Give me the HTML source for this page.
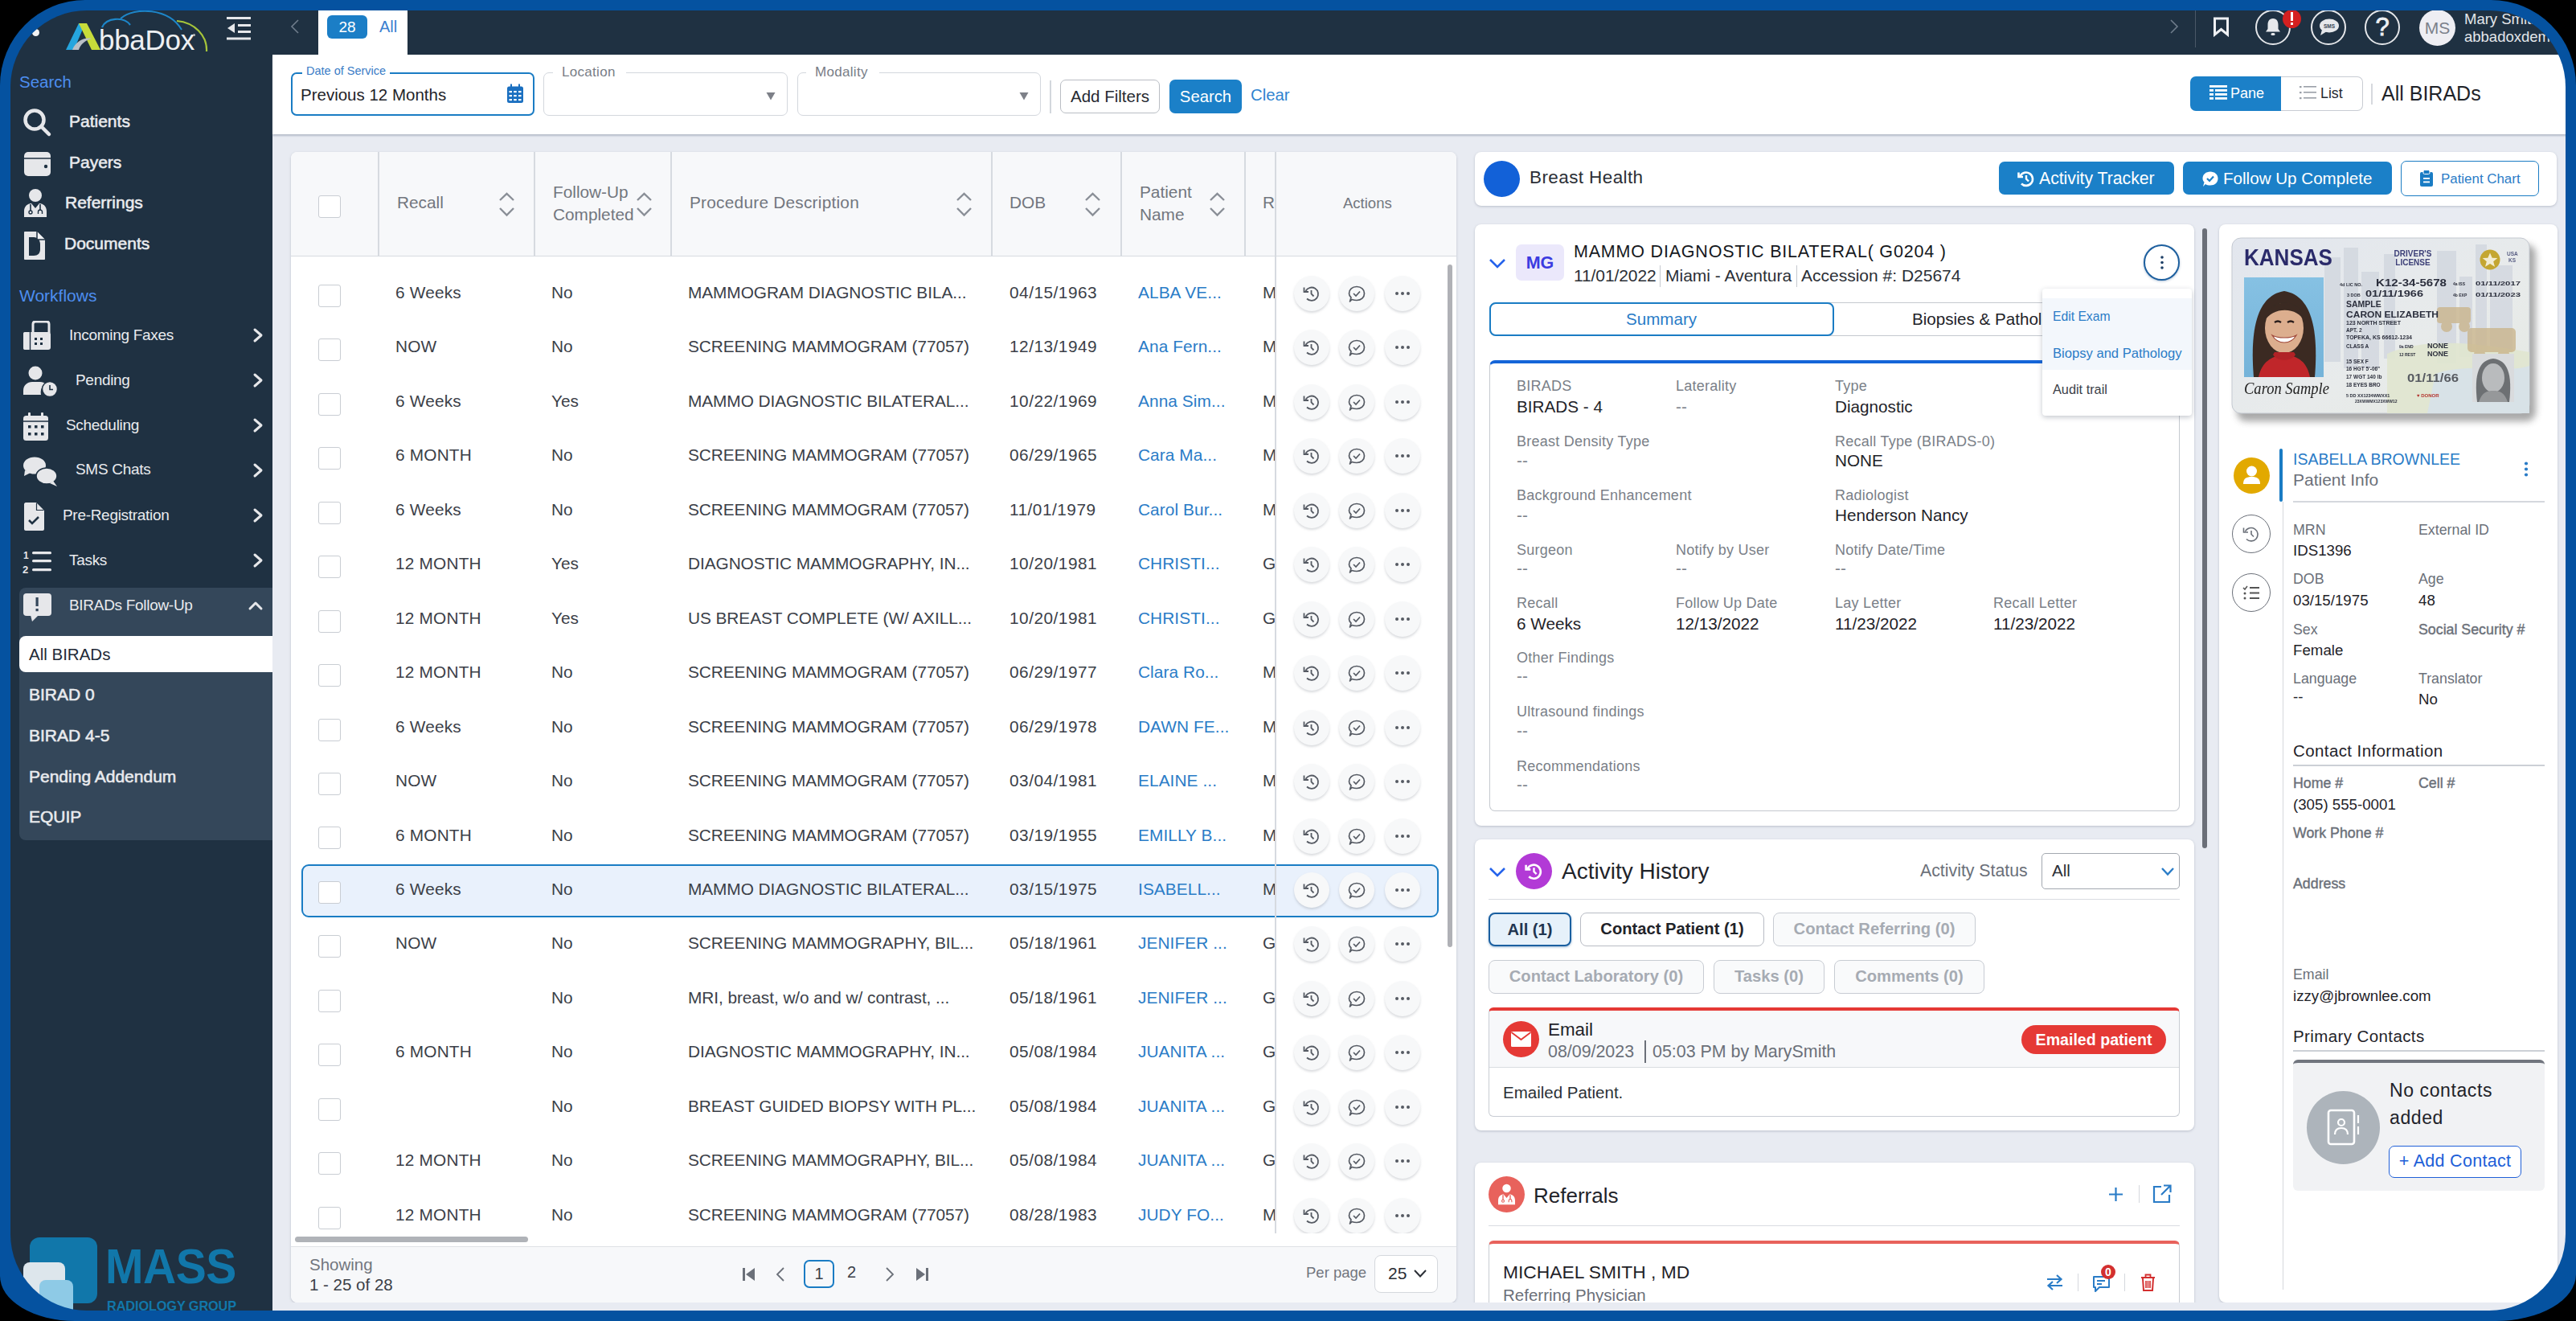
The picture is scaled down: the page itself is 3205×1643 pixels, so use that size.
<!DOCTYPE html>
<html><head><meta charset="utf-8">
<style>
*{box-sizing:border-box;margin:0;padding:0}
html,body{width:3205px;height:1643px;overflow:hidden}
body{font-family:"Liberation Sans",sans-serif;color:#2b2f36;position:relative;background:#e8ebf2}
.a{position:absolute}
.nw{white-space:nowrap}
#frameI{position:absolute;left:13px;top:13px;width:3179px;height:1617px;border-radius:95px;box-shadow:0 0 0 400px #0552a0;z-index:100;pointer-events:none}
#frameO{position:absolute;left:0;top:0;width:3205px;height:1643px;border-radius:106px 106px 100px 93px / 106px 106px 58px 56px;box-shadow:0 0 0 400px #000;z-index:101;pointer-events:none}
#topbar{left:0;top:0;width:3205px;height:68px;background:#1f3142}
#sidebar{left:0;top:0;width:339px;height:1643px;background:#1f3142}
.sb{color:#e9ebee;font-size:21px;font-weight:400;letter-spacing:0px;-webkit-text-stroke:0.55px #e9ebee}
.sbi{color:#e9ebee;font-size:19px;font-weight:400;letter-spacing:-0.3px}
.chev{width:11px;height:11px;border-right:3px solid #e9ebee;border-bottom:3px solid #e9ebee;transform:rotate(-45deg)}
#filter{left:339px;top:68px;width:2866px;height:99px;background:#fff;box-shadow:0 2px 2px rgba(120,130,150,.45)}
.card{background:#fff;border-radius:8px;box-shadow:0 1px 3px rgba(100,110,130,.35)}
</style></head>
<body>
<div id="sidebar" class="a"></div>
<div id="topbar" class="a"></div>
<div id="filter" class="a"></div>

<!-- TOPBAR CONTENT -->
<div class="a" style="left:40px;top:36px;width:9px;height:9px;border-radius:50%;background:#f2f2f2"></div>
<svg class="a" style="left:70px;top:8px" width="200" height="60" viewBox="0 0 200 60">
  <path d="M57 26 C 62 14, 84 12, 92 23" stroke="#1d86c9" stroke-width="2.2" fill="none"/>
  <path d="M80 15 C 98 0, 140 2, 156 29" stroke="#1d86c9" stroke-width="2" fill="none"/>
  <path d="M150 18 C 172 20, 188 36, 187 56" stroke="#a6c53a" stroke-width="2.2" fill="none"/>
  <path d="M12 54 L 28 21 L 36 21 L 22 54 Z" fill="#25a5de"/>
  <path d="M28 21 L 38 21 L 55 54 L 44 54 Z" fill="#c7dc3a"/>
  <path d="M20 54 C 24 44, 34 38, 44 40 C 34 43, 30 48, 28 54 Z" fill="#b9bfc6"/>
</svg>
<div class="a nw" style="left:123px;top:28px;font-size:35px;line-height:44px;color:#eef0f2;letter-spacing:-0.3px">bbaDox</div>
<div class="a" style="left:240px;top:42px;width:3px;height:3px;border-radius:50%;background:#bbb"></div>
<svg class="a" style="left:282px;top:21px" width="31" height="29" viewBox="0 0 31 29">
  <rect x="0" y="0" width="30" height="3" fill="#e6e8eb"/>
  <rect x="14" y="9" width="16" height="3" fill="#e6e8eb"/>
  <rect x="14" y="17" width="16" height="3" fill="#e6e8eb"/>
  <rect x="0" y="25.5" width="30" height="3" fill="#e6e8eb"/>
  <path d="M10 8 L 1 14 L 10 20 Z" fill="#e6e8eb"/>
</svg>
<svg class="a" style="left:360px;top:23px" width="14" height="20" viewBox="0 0 14 20"><path d="M11 2 L 3 10 L 11 18" stroke="#6f7d8c" stroke-width="1.6" fill="none"/></svg>
<div class="a" style="left:396px;top:13px;width:111px;height:55px;background:#fff"></div>
<div class="a nw" style="left:407px;top:19px;width:50px;height:29px;border-radius:6px;background:#1b7ec6;color:#fff;font-size:19px;line-height:29px;text-align:center">28</div>
<div class="a nw" style="left:472px;top:21px;font-size:20px;line-height:24px;color:#3b7fd0">All</div>
<svg class="a" style="left:2698px;top:23px" width="14" height="20" viewBox="0 0 14 20"><path d="M3 2 L 11 10 L 3 18" stroke="#6f7d8c" stroke-width="1.6" fill="none"/></svg>
<div class="a" style="left:2731px;top:13px;width:1px;height:46px;background:#4a5868"></div>
<svg class="a" style="left:2753px;top:21px" width="21" height="25" viewBox="0 0 21 25"><path d="M2.5 2 H18.5 V22 L10.5 15.5 L2.5 22 Z" stroke="#eef0f3" stroke-width="3" fill="none" stroke-linejoin="miter"/></svg>
<div class="a" style="left:2806px;top:12px;width:44px;height:44px;border-radius:50%;border:2px solid #e5e7ea"></div>
<svg class="a" style="left:2815px;top:20px" width="26" height="26" viewBox="0 0 26 26"><path d="M13 3 C 8 3, 6.5 7, 6.5 11 V 16 L 4 19.5 H 22 L 19.5 16 V 11 C 19.5 7, 18 3, 13 3 Z" fill="#e6e8eb"/><rect x="10.5" y="21" width="5" height="3" rx="1.5" fill="#e6e8eb"/></svg>
<div class="a" style="left:2840px;top:12px;width:23px;height:23px;border-radius:50%;background:#d42020"></div>
<div class="a" style="left:2850px;top:15px;width:3px;height:11px;background:#fff"></div>
<div class="a" style="left:2850px;top:28px;width:3px;height:3px;background:#fff"></div>
<div class="a" style="left:2875px;top:12px;width:44px;height:44px;border-radius:50%;border:2px solid #e5e7ea"></div>
<svg class="a" style="left:2884px;top:22px" width="28" height="24" viewBox="0 0 28 24"><ellipse cx="14" cy="10" rx="12" ry="8.5" fill="#e6e8eb"/><path d="M5 15 L 3 22 L 11 17 Z" fill="#e6e8eb"/><text x="14" y="12.5" font-size="6.5" font-family="Liberation Sans" font-weight="700" text-anchor="middle" fill="#3a4756">SMS</text></svg>
<div class="a" style="left:2942px;top:12px;width:44px;height:44px;border-radius:50%;border:2px solid #e5e7ea"></div>
<div class="a nw" style="left:2942px;top:14px;width:44px;text-align:center;font-size:31px;line-height:40px;font-weight:400;color:#eef0f3;-webkit-text-stroke:0.8px #eef0f3">?</div>
<div class="a" style="left:3010px;top:12px;width:45px;height:45px;border-radius:50%;background:#eeeef3"></div>
<div class="a nw" style="left:3010px;top:22px;width:45px;text-align:center;font-size:21px;line-height:26px;color:#7c818b">MS</div>
<div class="a nw" style="left:3066px;top:13px;font-size:18.5px;line-height:22px;color:#e3e6ea">Mary Smith</div>
<div class="a nw" style="left:3066px;top:35px;font-size:18.5px;line-height:22px;color:#e3e6ea">abbadoxdemo</div>

<!-- SIDEBAR CONTENT -->
<div class="a nw" style="left:24px;top:90px;font-size:20.5px;line-height:24px;color:#4d8ef0">Search</div>
<svg class="a" style="left:28px;top:134px" width="38" height="37" viewBox="0 0 38 37"><circle cx="15" cy="15" r="11.5" stroke="#e6e7ea" stroke-width="4.5" fill="none"/><path d="M23.5 23.5 L 33 33" stroke="#e6e7ea" stroke-width="4.5" stroke-linecap="round"/></svg>
<div class="a nw sb" style="left:86px;top:139px;line-height:24px">Patients</div>
<svg class="a" style="left:29px;top:188px" width="36" height="32" viewBox="0 0 36 32"><rect x="1" y="1" width="33" height="30" rx="5" fill="#e6e7ea"/><path d="M1 9 H34" stroke="#1f3142" stroke-width="1.6"/><circle cx="28" cy="19" r="2.2" fill="#1f3142"/></svg>
<div class="a nw sb" style="left:86px;top:190px;line-height:24px">Payers</div>
<svg class="a" style="left:29px;top:235px" width="32" height="36" viewBox="0 0 32 36"><circle cx="15" cy="8" r="8" fill="#e6e7ea"/><path d="M1 35 V 28 C 1 21, 6 18, 10 18 L 15 24 L 20 18 C 24 18, 29 21, 29 28 V 35 Z" fill="#e6e7ea"/><path d="M9 19 V 27 M 21 19 V 27" stroke="#1f3142" stroke-width="1.6"/><circle cx="9" cy="29" r="2" stroke="#1f3142" stroke-width="1.4" fill="none"/><path d="M18.5 31 V 28.5 A 2.5 2.5 0 0 1 23.5 28.5 V 31" stroke="#1f3142" stroke-width="1.4" fill="none"/></svg>
<div class="a nw sb" style="left:81px;top:240px;line-height:24px">Referrings</div>
<svg class="a" style="left:29px;top:287px" width="28" height="37" viewBox="0 0 28 37"><path d="M1 2 C 1 1.5, 1.5 1, 2 1 H 17 L 27 11 V 35 C 27 35.5, 26.5 36, 26 36 H 2 C 1.5 36, 1 35.5, 1 35 Z" fill="#e6e7ea"/><path d="M7 8 H 13 C 18 8, 21 12, 21 17 V 23 C 21 28, 18 31, 13 31 H 7 Z" fill="#1f3142"/><path d="M17 1 V 10 C 17 10.5, 17.5 11, 18 11 H 27" stroke="#1f3142" stroke-width="1.5" fill="#f2f3f5"/></svg>
<div class="a nw sb" style="left:80px;top:291px;line-height:24px">Documents</div>
<div class="a nw" style="left:24px;top:356px;font-size:21px;line-height:24px;color:#4d8ef0">Workflows</div>
<svg class="a" style="left:28px;top:399px" width="38" height="38" viewBox="0 0 38 38"><rect x="1" y="14" width="34" height="22" rx="3" fill="#e6e7ea"/><rect x="1" y="14" width="8" height="22" rx="2" fill="#e6e7ea"/><path d="M13 15 V 4 C 13 2, 14 1, 16 1 H 30 C 32 1, 33 2, 33 4 V 15" stroke="#e6e7ea" stroke-width="3" fill="none"/><path d="M9.5 14 V 36" stroke="#1f3142" stroke-width="1.4"/><rect x="15" y="21" width="3" height="3" fill="#1f3142"/><rect x="22" y="21" width="3" height="3" fill="#1f3142"/><rect x="15" y="27" width="3" height="3" fill="#1f3142"/><rect x="22" y="27" width="3" height="3" fill="#1f3142"/></svg>
<div class="a nw sbi" style="left:86px;top:406px;line-height:22px">Incoming Faxes</div>
<svg class="a" style="left:312px;top:407px" width="18" height="20" viewBox="0 0 18 20"><path d="M5 3 L 13 10 L 5 17" stroke="#e6e7ea" stroke-width="3" fill="none" stroke-linecap="round" stroke-linejoin="round"/></svg>

<svg class="a" style="left:28px;top:455px" width="46" height="38" viewBox="0 0 46 38"><circle cx="16" cy="9" r="8.5" fill="#e6e7ea"/><path d="M1 36 V 31 C 1 24, 6 20, 12 20 H 22 C 25 20, 27 21, 28 22 C 24 25, 22 30, 23 36 Z" fill="#e6e7ea"/><circle cx="34" cy="29" r="9.5" fill="#e6e7ea" stroke="#1f3142" stroke-width="1.5"/><path d="M34 24 V 29.5 H 38" stroke="#1f3142" stroke-width="1.6" fill="none"/></svg>
<div class="a nw sbi" style="left:94px;top:462px;line-height:22px">Pending</div>
<svg class="a" style="left:312px;top:463px" width="18" height="20" viewBox="0 0 18 20"><path d="M5 3 L 13 10 L 5 17" stroke="#e6e7ea" stroke-width="3" fill="none" stroke-linecap="round" stroke-linejoin="round"/></svg>

<svg class="a" style="left:28px;top:512px" width="34" height="37" viewBox="0 0 34 37"><rect x="1" y="5" width="31" height="31" rx="3.5" fill="#e6e7ea"/><rect x="7" y="1" width="3" height="8" rx="1" fill="#e6e7ea"/><rect x="23" y="1" width="3" height="8" rx="1" fill="#e6e7ea"/><path d="M1 12 H32" stroke="#1f3142" stroke-width="1.5"/><g fill="#1f3142"><rect x="7" y="17" width="3.5" height="3.5"/><rect x="15" y="17" width="3.5" height="3.5"/><rect x="23" y="17" width="3.5" height="3.5"/><rect x="7" y="26" width="3.5" height="3.5"/><rect x="15" y="26" width="3.5" height="3.5"/><rect x="23" y="26" width="3.5" height="3.5"/></g></svg>
<div class="a nw sbi" style="left:82px;top:518px;line-height:22px">Scheduling</div>
<svg class="a" style="left:312px;top:519px" width="18" height="20" viewBox="0 0 18 20"><path d="M5 3 L 13 10 L 5 17" stroke="#e6e7ea" stroke-width="3" fill="none" stroke-linecap="round" stroke-linejoin="round"/></svg>

<svg class="a" style="left:28px;top:568px" width="46" height="38" viewBox="0 0 46 38"><ellipse cx="15" cy="11" rx="14" ry="10.5" fill="#e6e7ea"/><path d="M3 17 L 2 24 L 10 20 Z" fill="#e6e7ea"/><ellipse cx="30" cy="24" rx="13" ry="10" fill="#e6e7ea" stroke="#1f3142" stroke-width="1.6"/><path d="M38 30 L 43 37 L 34 33 Z" fill="#e6e7ea"/></svg>
<div class="a nw sbi" style="left:94px;top:573px;line-height:22px">SMS Chats</div>
<svg class="a" style="left:312px;top:575px" width="18" height="20" viewBox="0 0 18 20"><path d="M5 3 L 13 10 L 5 17" stroke="#e6e7ea" stroke-width="3" fill="none" stroke-linecap="round" stroke-linejoin="round"/></svg>

<svg class="a" style="left:28px;top:624px" width="30" height="38" viewBox="0 0 30 38"><path d="M2 3 C 2 2, 3 1, 4 1 H 17 L 27 11 V 34 C 27 35, 26 36, 25 36 H 4 C 3 36, 2 35, 2 34 Z" fill="#e6e7ea"/><path d="M17 1 V 11 H 27" fill="#1f3142"/><path d="M17 1 L 27 11 H 18 C 17.5 11, 17 10.5, 17 10 Z" fill="#e6e7ea"/><path d="M17.5 1.5 V 10.5 H 26.5" stroke="#1f3142" stroke-width="1.2" fill="none"/><path d="M8 23 L 12 27 L 20 19" stroke="#1f3142" stroke-width="2.5" fill="none"/></svg>
<div class="a nw sbi" style="left:78px;top:630px;line-height:22px">Pre-Registration</div>
<svg class="a" style="left:312px;top:631px" width="18" height="20" viewBox="0 0 18 20"><path d="M5 3 L 13 10 L 5 17" stroke="#e6e7ea" stroke-width="3" fill="none" stroke-linecap="round" stroke-linejoin="round"/></svg>

<svg class="a" style="left:28px;top:683px" width="38" height="32" viewBox="0 0 38 32"><text x="1" y="12" font-size="12" font-weight="700" font-family="Liberation Sans" fill="#e6e7ea">1</text><text x="0" y="30" font-size="13" font-weight="700" font-family="Liberation Sans" fill="#e6e7ea">2</text><rect x="12" y="3" width="24" height="3.2" rx="1.5" fill="#e6e7ea"/><rect x="12" y="13" width="24" height="3.2" rx="1.5" fill="#e6e7ea"/><rect x="12" y="24" width="24" height="3.2" rx="1.5" fill="#e6e7ea"/></svg>
<div class="a nw sbi" style="left:86px;top:686px;line-height:22px">Tasks</div>
<svg class="a" style="left:312px;top:687px" width="18" height="20" viewBox="0 0 18 20"><path d="M5 3 L 13 10 L 5 17" stroke="#e6e7ea" stroke-width="3" fill="none" stroke-linecap="round" stroke-linejoin="round"/></svg>

<div class="a" style="left:24px;top:731px;width:315px;height:314px;border-radius:8px 0 0 8px;background:#34475a"></div>
<svg class="a" style="left:28px;top:737px" width="38" height="37" viewBox="0 0 38 37"><rect x="1" y="1" width="35" height="28" rx="4" fill="#e6e7ea"/><path d="M10 28 L 12 36 L 20 28 Z" fill="#e6e7ea"/><rect x="16.5" y="6" width="3.2" height="11" fill="#34475a"/><rect x="16.5" y="20" width="3.2" height="3.2" fill="#34475a"/></svg>
<div class="a nw sbi" style="left:86px;top:742px;line-height:22px">BIRADs Follow-Up</div>
<svg class="a" style="left:308px;top:744px" width="20" height="18" viewBox="0 0 20 18"><path d="M3 13 L 10 6 L 17 13" stroke="#e6e7ea" stroke-width="3" fill="none" stroke-linecap="round" stroke-linejoin="round"/></svg>
<div class="a" style="left:24px;top:791px;width:315px;height:45px;border-radius:8px 0 0 8px;background:#fff"></div>
<div class="a nw" style="left:36px;top:802px;font-size:20.5px;line-height:24px;color:#1f2a37">All BIRADs</div>
<div class="a nw sb" style="left:36px;top:852px;line-height:24px;font-weight:500">BIRAD 0</div>
<div class="a nw sb" style="left:36px;top:903px;line-height:24px;font-weight:500">BIRAD 4-5</div>
<div class="a nw sb" style="left:36px;top:954px;line-height:24px;font-weight:500">Pending Addendum</div>
<div class="a nw sb" style="left:36px;top:1004px;line-height:24px;font-weight:500">EQUIP</div>
<!-- MASS logo -->
<div class="a" style="left:37px;top:1539px;width:84px;height:82px;border-radius:12px;background:#1177aa"></div>
<div class="a" style="left:29px;top:1570px;width:52px;height:70px;border-radius:8px;background:#dde6ec"></div>
<div class="a" style="left:49px;top:1592px;width:42px;height:60px;border-radius:8px;background:#8ecae6"></div>
<div class="a nw" style="left:131px;top:1540px;font-size:61px;line-height:70px;font-weight:700;color:#1177aa;letter-spacing:-0.5px;transform:scaleX(0.935);transform-origin:0 0">MASS</div>
<div class="a nw" style="left:133px;top:1615px;font-size:16.3px;line-height:18px;font-weight:700;color:#1177aa;letter-spacing:-0.1px">RADIOLOGY GROUP</div>

<!-- FILTER BAR -->
<div class="a" style="left:362px;top:90px;width:303px;height:54px;border:2.5px solid #1a7cc4;border-radius:7px"></div>
<div class="a nw" style="left:376px;top:80px;padding:0 5px;background:#fff;font-size:14.5px;line-height:17px;color:#3a7cc6">Date of Service</div>
<div class="a nw" style="left:374px;top:106px;font-size:20.5px;line-height:24px;color:#1f2329">Previous 12 Months</div>
<svg class="a" style="left:630px;top:104px" width="22" height="25" viewBox="0 0 22 25"><rect x="1" y="3.5" width="20" height="20.5" rx="2.5" fill="#1a6fc0"/><rect x="5" y="0.5" width="2" height="5" fill="#1a6fc0"/><rect x="15" y="0.5" width="2" height="5" fill="#1a6fc0"/><g fill="#fff"><rect x="3.5" y="9" width="3.5" height="2.2"/><rect x="9.2" y="9" width="3.5" height="2.2"/><rect x="15" y="9" width="3.5" height="2.2"/><rect x="3.5" y="14" width="3.5" height="2.2"/><rect x="9.2" y="14" width="3.5" height="2.2"/><rect x="15" y="14" width="3.5" height="2.2"/><rect x="3.5" y="19" width="3.5" height="2.2"/><rect x="9.2" y="19" width="3.5" height="2.2"/><rect x="15" y="19" width="3.5" height="2.2"/></g></svg>
<div class="a" style="left:676px;top:90px;width:304px;height:54px;border:1.5px solid #d3d7dd;border-radius:7px"></div>
<div class="a nw" style="left:688px;top:80px;width:91px;padding-left:11px;background:#fff;font-size:17px;line-height:20px;color:#787d86;letter-spacing:0.3px">Location</div>
<svg class="a" style="left:953px;top:114px" width="12" height="11" viewBox="0 0 12 11"><path d="M0.5 1 H 11.5 L 6 10.5 Z" fill="#7d8088"/></svg>
<div class="a" style="left:992px;top:90px;width:303px;height:54px;border:1.5px solid #d3d7dd;border-radius:7px"></div>
<div class="a nw" style="left:1003px;top:80px;width:91px;padding-left:11px;background:#fff;font-size:17px;line-height:20px;color:#787d86;letter-spacing:0.3px">Modality</div>
<svg class="a" style="left:1268px;top:114px" width="12" height="11" viewBox="0 0 12 11"><path d="M0.5 1 H 11.5 L 6 10.5 Z" fill="#7d8088"/></svg>
<div class="a" style="left:1306px;top:100px;width:1.5px;height:41px;background:#d3d7dd"></div>
<div class="a nw" style="left:1319px;top:99px;width:124px;height:42px;border:1.5px solid #b9bdc4;border-radius:7px;font-size:20.5px;line-height:39px;text-align:center;color:#262a31">Add Filters</div>
<div class="a nw" style="left:1455px;top:99px;width:90px;height:42px;background:#1b80c8;border-radius:7px;font-size:20.3px;line-height:42px;text-align:center;color:#fff">Search</div>
<div class="a nw" style="left:1556px;top:106px;font-size:20.3px;line-height:24px;color:#2f83d0">Clear</div>
<div class="a" style="left:2725px;top:95px;width:114px;height:43px;background:#1b80c8;border-radius:7px 0 0 7px"></div>
<div class="a" style="left:2838px;top:95px;width:102px;height:43px;border:1.5px solid #c8ccd3;border-left:none;border-radius:0 7px 7px 0;background:#fff"></div>
<svg class="a" style="left:2749px;top:106px" width="22" height="18" viewBox="0 0 22 18"><g fill="#fff"><rect x="0" y="0" width="22" height="2.8"/><rect x="0" y="5" width="5" height="2.8"/><rect x="7" y="5" width="15" height="2.8"/><rect x="0" y="10" width="5" height="2.8"/><rect x="7" y="10" width="15" height="2.8"/><rect x="0" y="15" width="5" height="2.8"/><rect x="7" y="15" width="15" height="2.8"/></g></svg>
<div class="a nw" style="left:2775px;top:105px;font-size:18px;line-height:22px;color:#fff">Pane</div>
<svg class="a" style="left:2861px;top:106px" width="21" height="18" viewBox="0 0 21 18"><g fill="#9aa0a8"><rect x="0" y="1" width="2.5" height="2.2"/><rect x="0" y="8" width="2.5" height="2.2"/><rect x="0" y="15" width="2.5" height="2.2"/><rect x="5" y="1" width="16" height="1.6"/><rect x="5" y="8" width="16" height="1.6"/><rect x="5" y="15" width="16" height="1.6"/></g></svg>
<div class="a nw" style="left:2887px;top:105px;font-size:17.8px;line-height:22px;color:#262a31">List</div>
<div class="a" style="left:2950px;top:104px;width:1.5px;height:26px;background:#d6d9de"></div>
<div class="a nw" style="left:2963px;top:102px;font-size:25px;line-height:28px;color:#1f2329">All BIRADs</div>
<!-- TABLE CARD -->
<div class="a card" style="left:362px;top:189px;width:1450px;height:1431px;overflow:hidden">
<div class="a" style="left:0;top:0;width:1450px;height:130px;background:#f7f8fa;border-bottom:1.5px solid #d6dae0"></div>
<div class="a" style="left:0;top:1361px;width:1450px;height:70px;background:#f7f8fa;border-top:1.5px solid #dfe2e6"></div>
</div>
<div class="a" style="left:470px;top:189px;width:1.5px;height:130px;background:#d6dae0"></div>
<div class="a" style="left:664px;top:189px;width:1.5px;height:130px;background:#d6dae0"></div>
<div class="a" style="left:834px;top:189px;width:1.5px;height:130px;background:#d6dae0"></div>
<div class="a" style="left:1233px;top:189px;width:1.5px;height:130px;background:#d6dae0"></div>
<div class="a" style="left:1394px;top:189px;width:1.5px;height:130px;background:#d6dae0"></div>
<div class="a" style="left:1548px;top:189px;width:1.5px;height:130px;background:#d6dae0"></div>
<div class="a" style="left:396px;top:243px;width:28px;height:28px;border:1.5px solid #c9cdd3;border-radius:3px;background:#fff"></div>
<div class="a nw" style="left:494px;top:238px;font-size:20.8px;line-height:28px;color:#72767e">Recall</div>
<svg class="a" style="left:620px;top:239px" width="21" height="31" viewBox="0 0 21 31"><path d="M2 10 L 10.5 2 L 19 10 M 2 20 L 10.5 28.5 L 19 20" stroke="#8a8f97" stroke-width="2.4" fill="none"/></svg>

<div class="a nw" style="left:688px;top:225px;font-size:20.8px;line-height:28px;color:#72767e">Follow-Up<br>Completed</div>
<svg class="a" style="left:791px;top:239px" width="21" height="31" viewBox="0 0 21 31"><path d="M2 10 L 10.5 2 L 19 10 M 2 20 L 10.5 28.5 L 19 20" stroke="#8a8f97" stroke-width="2.4" fill="none"/></svg>

<div class="a nw" style="left:858px;top:238px;font-size:20.8px;line-height:28px;color:#72767e;letter-spacing:0.25px">Procedure Description</div>
<svg class="a" style="left:1189px;top:239px" width="21" height="31" viewBox="0 0 21 31"><path d="M2 10 L 10.5 2 L 19 10 M 2 20 L 10.5 28.5 L 19 20" stroke="#8a8f97" stroke-width="2.4" fill="none"/></svg>

<div class="a nw" style="left:1256px;top:238px;font-size:20.8px;line-height:28px;color:#72767e">DOB</div>
<svg class="a" style="left:1349px;top:239px" width="21" height="31" viewBox="0 0 21 31"><path d="M2 10 L 10.5 2 L 19 10 M 2 20 L 10.5 28.5 L 19 20" stroke="#8a8f97" stroke-width="2.4" fill="none"/></svg>

<div class="a nw" style="left:1418px;top:225px;font-size:20.8px;line-height:28px;color:#72767e">Patient<br>Name</div>
<svg class="a" style="left:1504px;top:239px" width="21" height="31" viewBox="0 0 21 31"><path d="M2 10 L 10.5 2 L 19 10 M 2 20 L 10.5 28.5 L 19 20" stroke="#8a8f97" stroke-width="2.4" fill="none"/></svg>

<div class="a" style="left:1548px;top:189px;width:38px;height:130px;overflow:hidden"><div class="a nw" style="left:23px;top:49px;font-size:20.8px;line-height:28px;color:#72767e">Re</div></div>
<div class="a nw" style="left:1671px;top:241px;font-size:18.5px;line-height:24px;color:#72767e">Actions</div>
<div class="a" style="left:362px;top:320px;width:1450px;height:1214px;overflow:hidden">
<div class="a" style="left:34px;top:34px;width:28px;height:28px;border:1.5px solid #c9cdd3;border-radius:3px;background:#fff"></div>
<div class="a nw" style="left:130px;top:31px;font-size:20.8px;line-height:26px;color:#3b4048;letter-spacing:0.2px">6 Weeks</div>
<div class="a nw" style="left:324px;top:31px;font-size:20.8px;line-height:26px;color:#3b4048">No</div>
<div class="a nw" style="left:494px;top:31px;font-size:20.8px;line-height:26px;color:#3b4048;letter-spacing:-0.05px">MAMMOGRAM DIAGNOSTIC BILA...</div>
<div class="a nw" style="left:894px;top:31px;font-size:20.8px;line-height:26px;color:#3b4048;letter-spacing:0.5px">04/15/1963</div>
<div class="a nw" style="left:1054px;top:31px;font-size:20.8px;line-height:26px;color:#3b4048;color:#2a7cc7;letter-spacing:0.1px">ALBA VE...</div>
<div class="a" style="left:1186px;top:31px;width:38px;height:30px;overflow:hidden"><div class="a nw" style="left:23px;top:0;font-size:20.8px;line-height:26px;color:#3b4048">M</div></div>
<div class="a" style="left:1248.4px;top:23.0px;width:44px;height:44px;border-radius:50%;background:#f7f8f9;box-shadow:0 2px 3px rgba(120,125,135,.28)"></div>
<div class="a" style="left:1304.4px;top:23.0px;width:44px;height:44px;border-radius:50%;background:#f7f8f9;box-shadow:0 2px 3px rgba(120,125,135,.28)"></div>
<div class="a" style="left:1360.7px;top:23.0px;width:44px;height:44px;border-radius:50%;background:#f7f8f9;box-shadow:0 2px 3px rgba(120,125,135,.28)"></div>
<svg class="a" style="left:1258.4px;top:33.0px" width="24" height="24" viewBox="0 0 24 24"><path d="M4.5 9 A 8.2 8.2 0 1 1 6 18.5" stroke="#555a63" stroke-width="1.8" fill="none"/><path d="M2.5 4.5 V 10 H 8" stroke="#555a63" stroke-width="1.8" fill="none"/><path d="M11.5 8 V 12.5 L 14.5 15.5" stroke="#555a63" stroke-width="1.8" fill="none"/></svg>
<svg class="a" style="left:1314.4px;top:33.0px" width="24" height="24" viewBox="0 0 24 24"><path d="M6 19.5 L 3.5 22 L 5 17 C 3 15.5, 2.5 13.5, 2.5 12 C 2.5 7, 6.5 3.5, 12 3.5 C 17.5 3.5, 21.5 7, 21.5 12 C 21.5 17, 17.5 20.5, 12 20.5 C 9.5 20.5, 7.5 20, 6 19.5 Z" stroke="#555a63" stroke-width="1.7" fill="none" stroke-linejoin="round"/><path d="M8 12 L 11 15 L 16 9.5" stroke="#555a63" stroke-width="1.7" fill="none"/></svg>
<svg class="a" style="left:1372.7px;top:42.0px" width="20" height="6" viewBox="0 0 20 6"><circle cx="3" cy="3" r="2" fill="#555a63"/><circle cx="10" cy="3" r="2" fill="#555a63"/><circle cx="17" cy="3" r="2" fill="#555a63"/></svg>
<div class="a" style="left:34px;top:101px;width:28px;height:28px;border:1.5px solid #c9cdd3;border-radius:3px;background:#fff"></div>
<div class="a nw" style="left:130px;top:98px;font-size:20.8px;line-height:26px;color:#3b4048;letter-spacing:0.2px">NOW</div>
<div class="a nw" style="left:324px;top:98px;font-size:20.8px;line-height:26px;color:#3b4048">No</div>
<div class="a nw" style="left:494px;top:98px;font-size:20.8px;line-height:26px;color:#3b4048;letter-spacing:-0.05px">SCREENING MAMMOGRAM (77057)</div>
<div class="a nw" style="left:894px;top:98px;font-size:20.8px;line-height:26px;color:#3b4048;letter-spacing:0.5px">12/13/1949</div>
<div class="a nw" style="left:1054px;top:98px;font-size:20.8px;line-height:26px;color:#3b4048;color:#2a7cc7;letter-spacing:0.1px">Ana Fern...</div>
<div class="a" style="left:1186px;top:98px;width:38px;height:30px;overflow:hidden"><div class="a nw" style="left:23px;top:0;font-size:20.8px;line-height:26px;color:#3b4048">M</div></div>
<div class="a" style="left:1248.4px;top:90.4px;width:44px;height:44px;border-radius:50%;background:#f7f8f9;box-shadow:0 2px 3px rgba(120,125,135,.28)"></div>
<div class="a" style="left:1304.4px;top:90.4px;width:44px;height:44px;border-radius:50%;background:#f7f8f9;box-shadow:0 2px 3px rgba(120,125,135,.28)"></div>
<div class="a" style="left:1360.7px;top:90.4px;width:44px;height:44px;border-radius:50%;background:#f7f8f9;box-shadow:0 2px 3px rgba(120,125,135,.28)"></div>
<svg class="a" style="left:1258.4px;top:100.4px" width="24" height="24" viewBox="0 0 24 24"><path d="M4.5 9 A 8.2 8.2 0 1 1 6 18.5" stroke="#555a63" stroke-width="1.8" fill="none"/><path d="M2.5 4.5 V 10 H 8" stroke="#555a63" stroke-width="1.8" fill="none"/><path d="M11.5 8 V 12.5 L 14.5 15.5" stroke="#555a63" stroke-width="1.8" fill="none"/></svg>
<svg class="a" style="left:1314.4px;top:100.4px" width="24" height="24" viewBox="0 0 24 24"><path d="M6 19.5 L 3.5 22 L 5 17 C 3 15.5, 2.5 13.5, 2.5 12 C 2.5 7, 6.5 3.5, 12 3.5 C 17.5 3.5, 21.5 7, 21.5 12 C 21.5 17, 17.5 20.5, 12 20.5 C 9.5 20.5, 7.5 20, 6 19.5 Z" stroke="#555a63" stroke-width="1.7" fill="none" stroke-linejoin="round"/><path d="M8 12 L 11 15 L 16 9.5" stroke="#555a63" stroke-width="1.7" fill="none"/></svg>
<svg class="a" style="left:1372.7px;top:109.4px" width="20" height="6" viewBox="0 0 20 6"><circle cx="3" cy="3" r="2" fill="#555a63"/><circle cx="10" cy="3" r="2" fill="#555a63"/><circle cx="17" cy="3" r="2" fill="#555a63"/></svg>
<div class="a" style="left:34px;top:169px;width:28px;height:28px;border:1.5px solid #c9cdd3;border-radius:3px;background:#fff"></div>
<div class="a nw" style="left:130px;top:166px;font-size:20.8px;line-height:26px;color:#3b4048;letter-spacing:0.2px">6 Weeks</div>
<div class="a nw" style="left:324px;top:166px;font-size:20.8px;line-height:26px;color:#3b4048">Yes</div>
<div class="a nw" style="left:494px;top:166px;font-size:20.8px;line-height:26px;color:#3b4048;letter-spacing:-0.05px">MAMMO DIAGNOSTIC BILATERAL...</div>
<div class="a nw" style="left:894px;top:166px;font-size:20.8px;line-height:26px;color:#3b4048;letter-spacing:0.5px">10/22/1969</div>
<div class="a nw" style="left:1054px;top:166px;font-size:20.8px;line-height:26px;color:#3b4048;color:#2a7cc7;letter-spacing:0.1px">Anna Sim...</div>
<div class="a" style="left:1186px;top:166px;width:38px;height:30px;overflow:hidden"><div class="a nw" style="left:23px;top:0;font-size:20.8px;line-height:26px;color:#3b4048">M</div></div>
<div class="a" style="left:1248.4px;top:157.9px;width:44px;height:44px;border-radius:50%;background:#f7f8f9;box-shadow:0 2px 3px rgba(120,125,135,.28)"></div>
<div class="a" style="left:1304.4px;top:157.9px;width:44px;height:44px;border-radius:50%;background:#f7f8f9;box-shadow:0 2px 3px rgba(120,125,135,.28)"></div>
<div class="a" style="left:1360.7px;top:157.9px;width:44px;height:44px;border-radius:50%;background:#f7f8f9;box-shadow:0 2px 3px rgba(120,125,135,.28)"></div>
<svg class="a" style="left:1258.4px;top:167.9px" width="24" height="24" viewBox="0 0 24 24"><path d="M4.5 9 A 8.2 8.2 0 1 1 6 18.5" stroke="#555a63" stroke-width="1.8" fill="none"/><path d="M2.5 4.5 V 10 H 8" stroke="#555a63" stroke-width="1.8" fill="none"/><path d="M11.5 8 V 12.5 L 14.5 15.5" stroke="#555a63" stroke-width="1.8" fill="none"/></svg>
<svg class="a" style="left:1314.4px;top:167.9px" width="24" height="24" viewBox="0 0 24 24"><path d="M6 19.5 L 3.5 22 L 5 17 C 3 15.5, 2.5 13.5, 2.5 12 C 2.5 7, 6.5 3.5, 12 3.5 C 17.5 3.5, 21.5 7, 21.5 12 C 21.5 17, 17.5 20.5, 12 20.5 C 9.5 20.5, 7.5 20, 6 19.5 Z" stroke="#555a63" stroke-width="1.7" fill="none" stroke-linejoin="round"/><path d="M8 12 L 11 15 L 16 9.5" stroke="#555a63" stroke-width="1.7" fill="none"/></svg>
<svg class="a" style="left:1372.7px;top:176.9px" width="20" height="6" viewBox="0 0 20 6"><circle cx="3" cy="3" r="2" fill="#555a63"/><circle cx="10" cy="3" r="2" fill="#555a63"/><circle cx="17" cy="3" r="2" fill="#555a63"/></svg>
<div class="a" style="left:34px;top:236px;width:28px;height:28px;border:1.5px solid #c9cdd3;border-radius:3px;background:#fff"></div>
<div class="a nw" style="left:130px;top:233px;font-size:20.8px;line-height:26px;color:#3b4048;letter-spacing:0.2px">6 MONTH</div>
<div class="a nw" style="left:324px;top:233px;font-size:20.8px;line-height:26px;color:#3b4048">No</div>
<div class="a nw" style="left:494px;top:233px;font-size:20.8px;line-height:26px;color:#3b4048;letter-spacing:-0.05px">SCREENING MAMMOGRAM (77057)</div>
<div class="a nw" style="left:894px;top:233px;font-size:20.8px;line-height:26px;color:#3b4048;letter-spacing:0.5px">06/29/1965</div>
<div class="a nw" style="left:1054px;top:233px;font-size:20.8px;line-height:26px;color:#3b4048;color:#2a7cc7;letter-spacing:0.1px">Cara Ma...</div>
<div class="a" style="left:1186px;top:233px;width:38px;height:30px;overflow:hidden"><div class="a nw" style="left:23px;top:0;font-size:20.8px;line-height:26px;color:#3b4048">M</div></div>
<div class="a" style="left:1248.4px;top:225.4px;width:44px;height:44px;border-radius:50%;background:#f7f8f9;box-shadow:0 2px 3px rgba(120,125,135,.28)"></div>
<div class="a" style="left:1304.4px;top:225.4px;width:44px;height:44px;border-radius:50%;background:#f7f8f9;box-shadow:0 2px 3px rgba(120,125,135,.28)"></div>
<div class="a" style="left:1360.7px;top:225.4px;width:44px;height:44px;border-radius:50%;background:#f7f8f9;box-shadow:0 2px 3px rgba(120,125,135,.28)"></div>
<svg class="a" style="left:1258.4px;top:235.4px" width="24" height="24" viewBox="0 0 24 24"><path d="M4.5 9 A 8.2 8.2 0 1 1 6 18.5" stroke="#555a63" stroke-width="1.8" fill="none"/><path d="M2.5 4.5 V 10 H 8" stroke="#555a63" stroke-width="1.8" fill="none"/><path d="M11.5 8 V 12.5 L 14.5 15.5" stroke="#555a63" stroke-width="1.8" fill="none"/></svg>
<svg class="a" style="left:1314.4px;top:235.4px" width="24" height="24" viewBox="0 0 24 24"><path d="M6 19.5 L 3.5 22 L 5 17 C 3 15.5, 2.5 13.5, 2.5 12 C 2.5 7, 6.5 3.5, 12 3.5 C 17.5 3.5, 21.5 7, 21.5 12 C 21.5 17, 17.5 20.5, 12 20.5 C 9.5 20.5, 7.5 20, 6 19.5 Z" stroke="#555a63" stroke-width="1.7" fill="none" stroke-linejoin="round"/><path d="M8 12 L 11 15 L 16 9.5" stroke="#555a63" stroke-width="1.7" fill="none"/></svg>
<svg class="a" style="left:1372.7px;top:244.4px" width="20" height="6" viewBox="0 0 20 6"><circle cx="3" cy="3" r="2" fill="#555a63"/><circle cx="10" cy="3" r="2" fill="#555a63"/><circle cx="17" cy="3" r="2" fill="#555a63"/></svg>
<div class="a" style="left:34px;top:304px;width:28px;height:28px;border:1.5px solid #c9cdd3;border-radius:3px;background:#fff"></div>
<div class="a nw" style="left:130px;top:301px;font-size:20.8px;line-height:26px;color:#3b4048;letter-spacing:0.2px">6 Weeks</div>
<div class="a nw" style="left:324px;top:301px;font-size:20.8px;line-height:26px;color:#3b4048">No</div>
<div class="a nw" style="left:494px;top:301px;font-size:20.8px;line-height:26px;color:#3b4048;letter-spacing:-0.05px">SCREENING MAMMOGRAM (77057)</div>
<div class="a nw" style="left:894px;top:301px;font-size:20.8px;line-height:26px;color:#3b4048;letter-spacing:0.5px">11/01/1979</div>
<div class="a nw" style="left:1054px;top:301px;font-size:20.8px;line-height:26px;color:#3b4048;color:#2a7cc7;letter-spacing:0.1px">Carol Bur...</div>
<div class="a" style="left:1186px;top:301px;width:38px;height:30px;overflow:hidden"><div class="a nw" style="left:23px;top:0;font-size:20.8px;line-height:26px;color:#3b4048">M</div></div>
<div class="a" style="left:1248.4px;top:292.8px;width:44px;height:44px;border-radius:50%;background:#f7f8f9;box-shadow:0 2px 3px rgba(120,125,135,.28)"></div>
<div class="a" style="left:1304.4px;top:292.8px;width:44px;height:44px;border-radius:50%;background:#f7f8f9;box-shadow:0 2px 3px rgba(120,125,135,.28)"></div>
<div class="a" style="left:1360.7px;top:292.8px;width:44px;height:44px;border-radius:50%;background:#f7f8f9;box-shadow:0 2px 3px rgba(120,125,135,.28)"></div>
<svg class="a" style="left:1258.4px;top:302.8px" width="24" height="24" viewBox="0 0 24 24"><path d="M4.5 9 A 8.2 8.2 0 1 1 6 18.5" stroke="#555a63" stroke-width="1.8" fill="none"/><path d="M2.5 4.5 V 10 H 8" stroke="#555a63" stroke-width="1.8" fill="none"/><path d="M11.5 8 V 12.5 L 14.5 15.5" stroke="#555a63" stroke-width="1.8" fill="none"/></svg>
<svg class="a" style="left:1314.4px;top:302.8px" width="24" height="24" viewBox="0 0 24 24"><path d="M6 19.5 L 3.5 22 L 5 17 C 3 15.5, 2.5 13.5, 2.5 12 C 2.5 7, 6.5 3.5, 12 3.5 C 17.5 3.5, 21.5 7, 21.5 12 C 21.5 17, 17.5 20.5, 12 20.5 C 9.5 20.5, 7.5 20, 6 19.5 Z" stroke="#555a63" stroke-width="1.7" fill="none" stroke-linejoin="round"/><path d="M8 12 L 11 15 L 16 9.5" stroke="#555a63" stroke-width="1.7" fill="none"/></svg>
<svg class="a" style="left:1372.7px;top:311.8px" width="20" height="6" viewBox="0 0 20 6"><circle cx="3" cy="3" r="2" fill="#555a63"/><circle cx="10" cy="3" r="2" fill="#555a63"/><circle cx="17" cy="3" r="2" fill="#555a63"/></svg>
<div class="a" style="left:34px;top:371px;width:28px;height:28px;border:1.5px solid #c9cdd3;border-radius:3px;background:#fff"></div>
<div class="a nw" style="left:130px;top:368px;font-size:20.8px;line-height:26px;color:#3b4048;letter-spacing:0.2px">12 MONTH</div>
<div class="a nw" style="left:324px;top:368px;font-size:20.8px;line-height:26px;color:#3b4048">Yes</div>
<div class="a nw" style="left:494px;top:368px;font-size:20.8px;line-height:26px;color:#3b4048;letter-spacing:-0.05px">DIAGNOSTIC MAMMOGRAPHY, IN...</div>
<div class="a nw" style="left:894px;top:368px;font-size:20.8px;line-height:26px;color:#3b4048;letter-spacing:0.5px">10/20/1981</div>
<div class="a nw" style="left:1054px;top:368px;font-size:20.8px;line-height:26px;color:#3b4048;color:#2a7cc7;letter-spacing:0.1px">CHRISTI...</div>
<div class="a" style="left:1186px;top:368px;width:38px;height:30px;overflow:hidden"><div class="a nw" style="left:23px;top:0;font-size:20.8px;line-height:26px;color:#3b4048">G</div></div>
<div class="a" style="left:1248.4px;top:360.2px;width:44px;height:44px;border-radius:50%;background:#f7f8f9;box-shadow:0 2px 3px rgba(120,125,135,.28)"></div>
<div class="a" style="left:1304.4px;top:360.2px;width:44px;height:44px;border-radius:50%;background:#f7f8f9;box-shadow:0 2px 3px rgba(120,125,135,.28)"></div>
<div class="a" style="left:1360.7px;top:360.2px;width:44px;height:44px;border-radius:50%;background:#f7f8f9;box-shadow:0 2px 3px rgba(120,125,135,.28)"></div>
<svg class="a" style="left:1258.4px;top:370.2px" width="24" height="24" viewBox="0 0 24 24"><path d="M4.5 9 A 8.2 8.2 0 1 1 6 18.5" stroke="#555a63" stroke-width="1.8" fill="none"/><path d="M2.5 4.5 V 10 H 8" stroke="#555a63" stroke-width="1.8" fill="none"/><path d="M11.5 8 V 12.5 L 14.5 15.5" stroke="#555a63" stroke-width="1.8" fill="none"/></svg>
<svg class="a" style="left:1314.4px;top:370.2px" width="24" height="24" viewBox="0 0 24 24"><path d="M6 19.5 L 3.5 22 L 5 17 C 3 15.5, 2.5 13.5, 2.5 12 C 2.5 7, 6.5 3.5, 12 3.5 C 17.5 3.5, 21.5 7, 21.5 12 C 21.5 17, 17.5 20.5, 12 20.5 C 9.5 20.5, 7.5 20, 6 19.5 Z" stroke="#555a63" stroke-width="1.7" fill="none" stroke-linejoin="round"/><path d="M8 12 L 11 15 L 16 9.5" stroke="#555a63" stroke-width="1.7" fill="none"/></svg>
<svg class="a" style="left:1372.7px;top:379.2px" width="20" height="6" viewBox="0 0 20 6"><circle cx="3" cy="3" r="2" fill="#555a63"/><circle cx="10" cy="3" r="2" fill="#555a63"/><circle cx="17" cy="3" r="2" fill="#555a63"/></svg>
<div class="a" style="left:34px;top:439px;width:28px;height:28px;border:1.5px solid #c9cdd3;border-radius:3px;background:#fff"></div>
<div class="a nw" style="left:130px;top:436px;font-size:20.8px;line-height:26px;color:#3b4048;letter-spacing:0.2px">12 MONTH</div>
<div class="a nw" style="left:324px;top:436px;font-size:20.8px;line-height:26px;color:#3b4048">Yes</div>
<div class="a nw" style="left:494px;top:436px;font-size:20.8px;line-height:26px;color:#3b4048;letter-spacing:-0.05px">US BREAST COMPLETE (W/ AXILL...</div>
<div class="a nw" style="left:894px;top:436px;font-size:20.8px;line-height:26px;color:#3b4048;letter-spacing:0.5px">10/20/1981</div>
<div class="a nw" style="left:1054px;top:436px;font-size:20.8px;line-height:26px;color:#3b4048;color:#2a7cc7;letter-spacing:0.1px">CHRISTI...</div>
<div class="a" style="left:1186px;top:436px;width:38px;height:30px;overflow:hidden"><div class="a nw" style="left:23px;top:0;font-size:20.8px;line-height:26px;color:#3b4048">G</div></div>
<div class="a" style="left:1248.4px;top:427.7px;width:44px;height:44px;border-radius:50%;background:#f7f8f9;box-shadow:0 2px 3px rgba(120,125,135,.28)"></div>
<div class="a" style="left:1304.4px;top:427.7px;width:44px;height:44px;border-radius:50%;background:#f7f8f9;box-shadow:0 2px 3px rgba(120,125,135,.28)"></div>
<div class="a" style="left:1360.7px;top:427.7px;width:44px;height:44px;border-radius:50%;background:#f7f8f9;box-shadow:0 2px 3px rgba(120,125,135,.28)"></div>
<svg class="a" style="left:1258.4px;top:437.7px" width="24" height="24" viewBox="0 0 24 24"><path d="M4.5 9 A 8.2 8.2 0 1 1 6 18.5" stroke="#555a63" stroke-width="1.8" fill="none"/><path d="M2.5 4.5 V 10 H 8" stroke="#555a63" stroke-width="1.8" fill="none"/><path d="M11.5 8 V 12.5 L 14.5 15.5" stroke="#555a63" stroke-width="1.8" fill="none"/></svg>
<svg class="a" style="left:1314.4px;top:437.7px" width="24" height="24" viewBox="0 0 24 24"><path d="M6 19.5 L 3.5 22 L 5 17 C 3 15.5, 2.5 13.5, 2.5 12 C 2.5 7, 6.5 3.5, 12 3.5 C 17.5 3.5, 21.5 7, 21.5 12 C 21.5 17, 17.5 20.5, 12 20.5 C 9.5 20.5, 7.5 20, 6 19.5 Z" stroke="#555a63" stroke-width="1.7" fill="none" stroke-linejoin="round"/><path d="M8 12 L 11 15 L 16 9.5" stroke="#555a63" stroke-width="1.7" fill="none"/></svg>
<svg class="a" style="left:1372.7px;top:446.7px" width="20" height="6" viewBox="0 0 20 6"><circle cx="3" cy="3" r="2" fill="#555a63"/><circle cx="10" cy="3" r="2" fill="#555a63"/><circle cx="17" cy="3" r="2" fill="#555a63"/></svg>
<div class="a" style="left:34px;top:506px;width:28px;height:28px;border:1.5px solid #c9cdd3;border-radius:3px;background:#fff"></div>
<div class="a nw" style="left:130px;top:503px;font-size:20.8px;line-height:26px;color:#3b4048;letter-spacing:0.2px">12 MONTH</div>
<div class="a nw" style="left:324px;top:503px;font-size:20.8px;line-height:26px;color:#3b4048">No</div>
<div class="a nw" style="left:494px;top:503px;font-size:20.8px;line-height:26px;color:#3b4048;letter-spacing:-0.05px">SCREENING MAMMOGRAM (77057)</div>
<div class="a nw" style="left:894px;top:503px;font-size:20.8px;line-height:26px;color:#3b4048;letter-spacing:0.5px">06/29/1977</div>
<div class="a nw" style="left:1054px;top:503px;font-size:20.8px;line-height:26px;color:#3b4048;color:#2a7cc7;letter-spacing:0.1px">Clara Ro...</div>
<div class="a" style="left:1186px;top:503px;width:38px;height:30px;overflow:hidden"><div class="a nw" style="left:23px;top:0;font-size:20.8px;line-height:26px;color:#3b4048">M</div></div>
<div class="a" style="left:1248.4px;top:495.2px;width:44px;height:44px;border-radius:50%;background:#f7f8f9;box-shadow:0 2px 3px rgba(120,125,135,.28)"></div>
<div class="a" style="left:1304.4px;top:495.2px;width:44px;height:44px;border-radius:50%;background:#f7f8f9;box-shadow:0 2px 3px rgba(120,125,135,.28)"></div>
<div class="a" style="left:1360.7px;top:495.2px;width:44px;height:44px;border-radius:50%;background:#f7f8f9;box-shadow:0 2px 3px rgba(120,125,135,.28)"></div>
<svg class="a" style="left:1258.4px;top:505.2px" width="24" height="24" viewBox="0 0 24 24"><path d="M4.5 9 A 8.2 8.2 0 1 1 6 18.5" stroke="#555a63" stroke-width="1.8" fill="none"/><path d="M2.5 4.5 V 10 H 8" stroke="#555a63" stroke-width="1.8" fill="none"/><path d="M11.5 8 V 12.5 L 14.5 15.5" stroke="#555a63" stroke-width="1.8" fill="none"/></svg>
<svg class="a" style="left:1314.4px;top:505.2px" width="24" height="24" viewBox="0 0 24 24"><path d="M6 19.5 L 3.5 22 L 5 17 C 3 15.5, 2.5 13.5, 2.5 12 C 2.5 7, 6.5 3.5, 12 3.5 C 17.5 3.5, 21.5 7, 21.5 12 C 21.5 17, 17.5 20.5, 12 20.5 C 9.5 20.5, 7.5 20, 6 19.5 Z" stroke="#555a63" stroke-width="1.7" fill="none" stroke-linejoin="round"/><path d="M8 12 L 11 15 L 16 9.5" stroke="#555a63" stroke-width="1.7" fill="none"/></svg>
<svg class="a" style="left:1372.7px;top:514.2px" width="20" height="6" viewBox="0 0 20 6"><circle cx="3" cy="3" r="2" fill="#555a63"/><circle cx="10" cy="3" r="2" fill="#555a63"/><circle cx="17" cy="3" r="2" fill="#555a63"/></svg>
<div class="a" style="left:34px;top:574px;width:28px;height:28px;border:1.5px solid #c9cdd3;border-radius:3px;background:#fff"></div>
<div class="a nw" style="left:130px;top:571px;font-size:20.8px;line-height:26px;color:#3b4048;letter-spacing:0.2px">6 Weeks</div>
<div class="a nw" style="left:324px;top:571px;font-size:20.8px;line-height:26px;color:#3b4048">No</div>
<div class="a nw" style="left:494px;top:571px;font-size:20.8px;line-height:26px;color:#3b4048;letter-spacing:-0.05px">SCREENING MAMMOGRAM (77057)</div>
<div class="a nw" style="left:894px;top:571px;font-size:20.8px;line-height:26px;color:#3b4048;letter-spacing:0.5px">06/29/1978</div>
<div class="a nw" style="left:1054px;top:571px;font-size:20.8px;line-height:26px;color:#3b4048;color:#2a7cc7;letter-spacing:0.1px">DAWN FE...</div>
<div class="a" style="left:1186px;top:571px;width:38px;height:30px;overflow:hidden"><div class="a nw" style="left:23px;top:0;font-size:20.8px;line-height:26px;color:#3b4048">M</div></div>
<div class="a" style="left:1248.4px;top:562.6px;width:44px;height:44px;border-radius:50%;background:#f7f8f9;box-shadow:0 2px 3px rgba(120,125,135,.28)"></div>
<div class="a" style="left:1304.4px;top:562.6px;width:44px;height:44px;border-radius:50%;background:#f7f8f9;box-shadow:0 2px 3px rgba(120,125,135,.28)"></div>
<div class="a" style="left:1360.7px;top:562.6px;width:44px;height:44px;border-radius:50%;background:#f7f8f9;box-shadow:0 2px 3px rgba(120,125,135,.28)"></div>
<svg class="a" style="left:1258.4px;top:572.6px" width="24" height="24" viewBox="0 0 24 24"><path d="M4.5 9 A 8.2 8.2 0 1 1 6 18.5" stroke="#555a63" stroke-width="1.8" fill="none"/><path d="M2.5 4.5 V 10 H 8" stroke="#555a63" stroke-width="1.8" fill="none"/><path d="M11.5 8 V 12.5 L 14.5 15.5" stroke="#555a63" stroke-width="1.8" fill="none"/></svg>
<svg class="a" style="left:1314.4px;top:572.6px" width="24" height="24" viewBox="0 0 24 24"><path d="M6 19.5 L 3.5 22 L 5 17 C 3 15.5, 2.5 13.5, 2.5 12 C 2.5 7, 6.5 3.5, 12 3.5 C 17.5 3.5, 21.5 7, 21.5 12 C 21.5 17, 17.5 20.5, 12 20.5 C 9.5 20.5, 7.5 20, 6 19.5 Z" stroke="#555a63" stroke-width="1.7" fill="none" stroke-linejoin="round"/><path d="M8 12 L 11 15 L 16 9.5" stroke="#555a63" stroke-width="1.7" fill="none"/></svg>
<svg class="a" style="left:1372.7px;top:581.6px" width="20" height="6" viewBox="0 0 20 6"><circle cx="3" cy="3" r="2" fill="#555a63"/><circle cx="10" cy="3" r="2" fill="#555a63"/><circle cx="17" cy="3" r="2" fill="#555a63"/></svg>
<div class="a" style="left:34px;top:641px;width:28px;height:28px;border:1.5px solid #c9cdd3;border-radius:3px;background:#fff"></div>
<div class="a nw" style="left:130px;top:638px;font-size:20.8px;line-height:26px;color:#3b4048;letter-spacing:0.2px">NOW</div>
<div class="a nw" style="left:324px;top:638px;font-size:20.8px;line-height:26px;color:#3b4048">No</div>
<div class="a nw" style="left:494px;top:638px;font-size:20.8px;line-height:26px;color:#3b4048;letter-spacing:-0.05px">SCREENING MAMMOGRAM (77057)</div>
<div class="a nw" style="left:894px;top:638px;font-size:20.8px;line-height:26px;color:#3b4048;letter-spacing:0.5px">03/04/1981</div>
<div class="a nw" style="left:1054px;top:638px;font-size:20.8px;line-height:26px;color:#3b4048;color:#2a7cc7;letter-spacing:0.1px">ELAINE ...</div>
<div class="a" style="left:1186px;top:638px;width:38px;height:30px;overflow:hidden"><div class="a nw" style="left:23px;top:0;font-size:20.8px;line-height:26px;color:#3b4048">M</div></div>
<div class="a" style="left:1248.4px;top:630.1px;width:44px;height:44px;border-radius:50%;background:#f7f8f9;box-shadow:0 2px 3px rgba(120,125,135,.28)"></div>
<div class="a" style="left:1304.4px;top:630.1px;width:44px;height:44px;border-radius:50%;background:#f7f8f9;box-shadow:0 2px 3px rgba(120,125,135,.28)"></div>
<div class="a" style="left:1360.7px;top:630.1px;width:44px;height:44px;border-radius:50%;background:#f7f8f9;box-shadow:0 2px 3px rgba(120,125,135,.28)"></div>
<svg class="a" style="left:1258.4px;top:640.1px" width="24" height="24" viewBox="0 0 24 24"><path d="M4.5 9 A 8.2 8.2 0 1 1 6 18.5" stroke="#555a63" stroke-width="1.8" fill="none"/><path d="M2.5 4.5 V 10 H 8" stroke="#555a63" stroke-width="1.8" fill="none"/><path d="M11.5 8 V 12.5 L 14.5 15.5" stroke="#555a63" stroke-width="1.8" fill="none"/></svg>
<svg class="a" style="left:1314.4px;top:640.1px" width="24" height="24" viewBox="0 0 24 24"><path d="M6 19.5 L 3.5 22 L 5 17 C 3 15.5, 2.5 13.5, 2.5 12 C 2.5 7, 6.5 3.5, 12 3.5 C 17.5 3.5, 21.5 7, 21.5 12 C 21.5 17, 17.5 20.5, 12 20.5 C 9.5 20.5, 7.5 20, 6 19.5 Z" stroke="#555a63" stroke-width="1.7" fill="none" stroke-linejoin="round"/><path d="M8 12 L 11 15 L 16 9.5" stroke="#555a63" stroke-width="1.7" fill="none"/></svg>
<svg class="a" style="left:1372.7px;top:649.1px" width="20" height="6" viewBox="0 0 20 6"><circle cx="3" cy="3" r="2" fill="#555a63"/><circle cx="10" cy="3" r="2" fill="#555a63"/><circle cx="17" cy="3" r="2" fill="#555a63"/></svg>
<div class="a" style="left:34px;top:708px;width:28px;height:28px;border:1.5px solid #c9cdd3;border-radius:3px;background:#fff"></div>
<div class="a nw" style="left:130px;top:706px;font-size:20.8px;line-height:26px;color:#3b4048;letter-spacing:0.2px">6 MONTH</div>
<div class="a nw" style="left:324px;top:706px;font-size:20.8px;line-height:26px;color:#3b4048">No</div>
<div class="a nw" style="left:494px;top:706px;font-size:20.8px;line-height:26px;color:#3b4048;letter-spacing:-0.05px">SCREENING MAMMOGRAM (77057)</div>
<div class="a nw" style="left:894px;top:706px;font-size:20.8px;line-height:26px;color:#3b4048;letter-spacing:0.5px">03/19/1955</div>
<div class="a nw" style="left:1054px;top:706px;font-size:20.8px;line-height:26px;color:#3b4048;color:#2a7cc7;letter-spacing:0.1px">EMILLY B...</div>
<div class="a" style="left:1186px;top:706px;width:38px;height:30px;overflow:hidden"><div class="a nw" style="left:23px;top:0;font-size:20.8px;line-height:26px;color:#3b4048">M</div></div>
<div class="a" style="left:1248.4px;top:697.5px;width:44px;height:44px;border-radius:50%;background:#f7f8f9;box-shadow:0 2px 3px rgba(120,125,135,.28)"></div>
<div class="a" style="left:1304.4px;top:697.5px;width:44px;height:44px;border-radius:50%;background:#f7f8f9;box-shadow:0 2px 3px rgba(120,125,135,.28)"></div>
<div class="a" style="left:1360.7px;top:697.5px;width:44px;height:44px;border-radius:50%;background:#f7f8f9;box-shadow:0 2px 3px rgba(120,125,135,.28)"></div>
<svg class="a" style="left:1258.4px;top:707.5px" width="24" height="24" viewBox="0 0 24 24"><path d="M4.5 9 A 8.2 8.2 0 1 1 6 18.5" stroke="#555a63" stroke-width="1.8" fill="none"/><path d="M2.5 4.5 V 10 H 8" stroke="#555a63" stroke-width="1.8" fill="none"/><path d="M11.5 8 V 12.5 L 14.5 15.5" stroke="#555a63" stroke-width="1.8" fill="none"/></svg>
<svg class="a" style="left:1314.4px;top:707.5px" width="24" height="24" viewBox="0 0 24 24"><path d="M6 19.5 L 3.5 22 L 5 17 C 3 15.5, 2.5 13.5, 2.5 12 C 2.5 7, 6.5 3.5, 12 3.5 C 17.5 3.5, 21.5 7, 21.5 12 C 21.5 17, 17.5 20.5, 12 20.5 C 9.5 20.5, 7.5 20, 6 19.5 Z" stroke="#555a63" stroke-width="1.7" fill="none" stroke-linejoin="round"/><path d="M8 12 L 11 15 L 16 9.5" stroke="#555a63" stroke-width="1.7" fill="none"/></svg>
<svg class="a" style="left:1372.7px;top:716.5px" width="20" height="6" viewBox="0 0 20 6"><circle cx="3" cy="3" r="2" fill="#555a63"/><circle cx="10" cy="3" r="2" fill="#555a63"/><circle cx="17" cy="3" r="2" fill="#555a63"/></svg>
<div class="a" style="left:12.5px;top:754.5px;width:1415.0px;height:66px;border:2px solid #1a7cc4;border-radius:9px;background:#e9f1fc"></div>
<div class="a" style="left:34px;top:776px;width:28px;height:28px;border:1.5px solid #c9cdd3;border-radius:3px;background:#fff"></div>
<div class="a nw" style="left:130px;top:773px;font-size:20.8px;line-height:26px;color:#3b4048;letter-spacing:0.2px">6 Weeks</div>
<div class="a nw" style="left:324px;top:773px;font-size:20.8px;line-height:26px;color:#3b4048">No</div>
<div class="a nw" style="left:494px;top:773px;font-size:20.8px;line-height:26px;color:#3b4048;letter-spacing:-0.05px">MAMMO DIAGNOSTIC BILATERAL...</div>
<div class="a nw" style="left:894px;top:773px;font-size:20.8px;line-height:26px;color:#3b4048;letter-spacing:0.5px">03/15/1975</div>
<div class="a nw" style="left:1054px;top:773px;font-size:20.8px;line-height:26px;color:#3b4048;color:#2a7cc7;letter-spacing:0.1px">ISABELL...</div>
<div class="a" style="left:1186px;top:773px;width:38px;height:30px;overflow:hidden"><div class="a nw" style="left:23px;top:0;font-size:20.8px;line-height:26px;color:#3b4048">M</div></div>
<div class="a" style="left:1248.4px;top:765.0px;width:44px;height:44px;border-radius:50%;background:#f7f8f9;box-shadow:0 2px 3px rgba(120,125,135,.28)"></div>
<div class="a" style="left:1304.4px;top:765.0px;width:44px;height:44px;border-radius:50%;background:#f7f8f9;box-shadow:0 2px 3px rgba(120,125,135,.28)"></div>
<div class="a" style="left:1360.7px;top:765.0px;width:44px;height:44px;border-radius:50%;background:#f7f8f9;box-shadow:0 2px 3px rgba(120,125,135,.28)"></div>
<svg class="a" style="left:1258.4px;top:775.0px" width="24" height="24" viewBox="0 0 24 24"><path d="M4.5 9 A 8.2 8.2 0 1 1 6 18.5" stroke="#555a63" stroke-width="1.8" fill="none"/><path d="M2.5 4.5 V 10 H 8" stroke="#555a63" stroke-width="1.8" fill="none"/><path d="M11.5 8 V 12.5 L 14.5 15.5" stroke="#555a63" stroke-width="1.8" fill="none"/></svg>
<svg class="a" style="left:1314.4px;top:775.0px" width="24" height="24" viewBox="0 0 24 24"><path d="M6 19.5 L 3.5 22 L 5 17 C 3 15.5, 2.5 13.5, 2.5 12 C 2.5 7, 6.5 3.5, 12 3.5 C 17.5 3.5, 21.5 7, 21.5 12 C 21.5 17, 17.5 20.5, 12 20.5 C 9.5 20.5, 7.5 20, 6 19.5 Z" stroke="#555a63" stroke-width="1.7" fill="none" stroke-linejoin="round"/><path d="M8 12 L 11 15 L 16 9.5" stroke="#555a63" stroke-width="1.7" fill="none"/></svg>
<svg class="a" style="left:1372.7px;top:784.0px" width="20" height="6" viewBox="0 0 20 6"><circle cx="3" cy="3" r="2" fill="#555a63"/><circle cx="10" cy="3" r="2" fill="#555a63"/><circle cx="17" cy="3" r="2" fill="#555a63"/></svg>
<div class="a" style="left:34px;top:843px;width:28px;height:28px;border:1.5px solid #c9cdd3;border-radius:3px;background:#fff"></div>
<div class="a nw" style="left:130px;top:840px;font-size:20.8px;line-height:26px;color:#3b4048;letter-spacing:0.2px">NOW</div>
<div class="a nw" style="left:324px;top:840px;font-size:20.8px;line-height:26px;color:#3b4048">No</div>
<div class="a nw" style="left:494px;top:840px;font-size:20.8px;line-height:26px;color:#3b4048;letter-spacing:-0.05px">SCREENING MAMMOGRAPHY, BIL...</div>
<div class="a nw" style="left:894px;top:840px;font-size:20.8px;line-height:26px;color:#3b4048;letter-spacing:0.5px">05/18/1961</div>
<div class="a nw" style="left:1054px;top:840px;font-size:20.8px;line-height:26px;color:#3b4048;color:#2a7cc7;letter-spacing:0.1px">JENIFER ...</div>
<div class="a" style="left:1186px;top:840px;width:38px;height:30px;overflow:hidden"><div class="a nw" style="left:23px;top:0;font-size:20.8px;line-height:26px;color:#3b4048">G</div></div>
<div class="a" style="left:1248.4px;top:832.4px;width:44px;height:44px;border-radius:50%;background:#f7f8f9;box-shadow:0 2px 3px rgba(120,125,135,.28)"></div>
<div class="a" style="left:1304.4px;top:832.4px;width:44px;height:44px;border-radius:50%;background:#f7f8f9;box-shadow:0 2px 3px rgba(120,125,135,.28)"></div>
<div class="a" style="left:1360.7px;top:832.4px;width:44px;height:44px;border-radius:50%;background:#f7f8f9;box-shadow:0 2px 3px rgba(120,125,135,.28)"></div>
<svg class="a" style="left:1258.4px;top:842.4px" width="24" height="24" viewBox="0 0 24 24"><path d="M4.5 9 A 8.2 8.2 0 1 1 6 18.5" stroke="#555a63" stroke-width="1.8" fill="none"/><path d="M2.5 4.5 V 10 H 8" stroke="#555a63" stroke-width="1.8" fill="none"/><path d="M11.5 8 V 12.5 L 14.5 15.5" stroke="#555a63" stroke-width="1.8" fill="none"/></svg>
<svg class="a" style="left:1314.4px;top:842.4px" width="24" height="24" viewBox="0 0 24 24"><path d="M6 19.5 L 3.5 22 L 5 17 C 3 15.5, 2.5 13.5, 2.5 12 C 2.5 7, 6.5 3.5, 12 3.5 C 17.5 3.5, 21.5 7, 21.5 12 C 21.5 17, 17.5 20.5, 12 20.5 C 9.5 20.5, 7.5 20, 6 19.5 Z" stroke="#555a63" stroke-width="1.7" fill="none" stroke-linejoin="round"/><path d="M8 12 L 11 15 L 16 9.5" stroke="#555a63" stroke-width="1.7" fill="none"/></svg>
<svg class="a" style="left:1372.7px;top:851.4px" width="20" height="6" viewBox="0 0 20 6"><circle cx="3" cy="3" r="2" fill="#555a63"/><circle cx="10" cy="3" r="2" fill="#555a63"/><circle cx="17" cy="3" r="2" fill="#555a63"/></svg>
<div class="a" style="left:34px;top:911px;width:28px;height:28px;border:1.5px solid #c9cdd3;border-radius:3px;background:#fff"></div>
<div class="a nw" style="left:130px;top:908px;font-size:20.8px;line-height:26px;color:#3b4048;letter-spacing:0.2px"></div>
<div class="a nw" style="left:324px;top:908px;font-size:20.8px;line-height:26px;color:#3b4048">No</div>
<div class="a nw" style="left:494px;top:908px;font-size:20.8px;line-height:26px;color:#3b4048;letter-spacing:-0.05px">MRI, breast, w/o and w/ contrast, ...</div>
<div class="a nw" style="left:894px;top:908px;font-size:20.8px;line-height:26px;color:#3b4048;letter-spacing:0.5px">05/18/1961</div>
<div class="a nw" style="left:1054px;top:908px;font-size:20.8px;line-height:26px;color:#3b4048;color:#2a7cc7;letter-spacing:0.1px">JENIFER ...</div>
<div class="a" style="left:1186px;top:908px;width:38px;height:30px;overflow:hidden"><div class="a nw" style="left:23px;top:0;font-size:20.8px;line-height:26px;color:#3b4048">G</div></div>
<div class="a" style="left:1248.4px;top:899.8px;width:44px;height:44px;border-radius:50%;background:#f7f8f9;box-shadow:0 2px 3px rgba(120,125,135,.28)"></div>
<div class="a" style="left:1304.4px;top:899.8px;width:44px;height:44px;border-radius:50%;background:#f7f8f9;box-shadow:0 2px 3px rgba(120,125,135,.28)"></div>
<div class="a" style="left:1360.7px;top:899.8px;width:44px;height:44px;border-radius:50%;background:#f7f8f9;box-shadow:0 2px 3px rgba(120,125,135,.28)"></div>
<svg class="a" style="left:1258.4px;top:909.8px" width="24" height="24" viewBox="0 0 24 24"><path d="M4.5 9 A 8.2 8.2 0 1 1 6 18.5" stroke="#555a63" stroke-width="1.8" fill="none"/><path d="M2.5 4.5 V 10 H 8" stroke="#555a63" stroke-width="1.8" fill="none"/><path d="M11.5 8 V 12.5 L 14.5 15.5" stroke="#555a63" stroke-width="1.8" fill="none"/></svg>
<svg class="a" style="left:1314.4px;top:909.8px" width="24" height="24" viewBox="0 0 24 24"><path d="M6 19.5 L 3.5 22 L 5 17 C 3 15.5, 2.5 13.5, 2.5 12 C 2.5 7, 6.5 3.5, 12 3.5 C 17.5 3.5, 21.5 7, 21.5 12 C 21.5 17, 17.5 20.5, 12 20.5 C 9.5 20.5, 7.5 20, 6 19.5 Z" stroke="#555a63" stroke-width="1.7" fill="none" stroke-linejoin="round"/><path d="M8 12 L 11 15 L 16 9.5" stroke="#555a63" stroke-width="1.7" fill="none"/></svg>
<svg class="a" style="left:1372.7px;top:918.8px" width="20" height="6" viewBox="0 0 20 6"><circle cx="3" cy="3" r="2" fill="#555a63"/><circle cx="10" cy="3" r="2" fill="#555a63"/><circle cx="17" cy="3" r="2" fill="#555a63"/></svg>
<div class="a" style="left:34px;top:978px;width:28px;height:28px;border:1.5px solid #c9cdd3;border-radius:3px;background:#fff"></div>
<div class="a nw" style="left:130px;top:975px;font-size:20.8px;line-height:26px;color:#3b4048;letter-spacing:0.2px">6 MONTH</div>
<div class="a nw" style="left:324px;top:975px;font-size:20.8px;line-height:26px;color:#3b4048">No</div>
<div class="a nw" style="left:494px;top:975px;font-size:20.8px;line-height:26px;color:#3b4048;letter-spacing:-0.05px">DIAGNOSTIC MAMMOGRAPHY, IN...</div>
<div class="a nw" style="left:894px;top:975px;font-size:20.8px;line-height:26px;color:#3b4048;letter-spacing:0.5px">05/08/1984</div>
<div class="a nw" style="left:1054px;top:975px;font-size:20.8px;line-height:26px;color:#3b4048;color:#2a7cc7;letter-spacing:0.1px">JUANITA ...</div>
<div class="a" style="left:1186px;top:975px;width:38px;height:30px;overflow:hidden"><div class="a nw" style="left:23px;top:0;font-size:20.8px;line-height:26px;color:#3b4048">G</div></div>
<div class="a" style="left:1248.4px;top:967.3px;width:44px;height:44px;border-radius:50%;background:#f7f8f9;box-shadow:0 2px 3px rgba(120,125,135,.28)"></div>
<div class="a" style="left:1304.4px;top:967.3px;width:44px;height:44px;border-radius:50%;background:#f7f8f9;box-shadow:0 2px 3px rgba(120,125,135,.28)"></div>
<div class="a" style="left:1360.7px;top:967.3px;width:44px;height:44px;border-radius:50%;background:#f7f8f9;box-shadow:0 2px 3px rgba(120,125,135,.28)"></div>
<svg class="a" style="left:1258.4px;top:977.3px" width="24" height="24" viewBox="0 0 24 24"><path d="M4.5 9 A 8.2 8.2 0 1 1 6 18.5" stroke="#555a63" stroke-width="1.8" fill="none"/><path d="M2.5 4.5 V 10 H 8" stroke="#555a63" stroke-width="1.8" fill="none"/><path d="M11.5 8 V 12.5 L 14.5 15.5" stroke="#555a63" stroke-width="1.8" fill="none"/></svg>
<svg class="a" style="left:1314.4px;top:977.3px" width="24" height="24" viewBox="0 0 24 24"><path d="M6 19.5 L 3.5 22 L 5 17 C 3 15.5, 2.5 13.5, 2.5 12 C 2.5 7, 6.5 3.5, 12 3.5 C 17.5 3.5, 21.5 7, 21.5 12 C 21.5 17, 17.5 20.5, 12 20.5 C 9.5 20.5, 7.5 20, 6 19.5 Z" stroke="#555a63" stroke-width="1.7" fill="none" stroke-linejoin="round"/><path d="M8 12 L 11 15 L 16 9.5" stroke="#555a63" stroke-width="1.7" fill="none"/></svg>
<svg class="a" style="left:1372.7px;top:986.3px" width="20" height="6" viewBox="0 0 20 6"><circle cx="3" cy="3" r="2" fill="#555a63"/><circle cx="10" cy="3" r="2" fill="#555a63"/><circle cx="17" cy="3" r="2" fill="#555a63"/></svg>
<div class="a" style="left:34px;top:1046px;width:28px;height:28px;border:1.5px solid #c9cdd3;border-radius:3px;background:#fff"></div>
<div class="a nw" style="left:130px;top:1043px;font-size:20.8px;line-height:26px;color:#3b4048;letter-spacing:0.2px"></div>
<div class="a nw" style="left:324px;top:1043px;font-size:20.8px;line-height:26px;color:#3b4048">No</div>
<div class="a nw" style="left:494px;top:1043px;font-size:20.8px;line-height:26px;color:#3b4048;letter-spacing:-0.05px">BREAST GUIDED BIOPSY WITH PL...</div>
<div class="a nw" style="left:894px;top:1043px;font-size:20.8px;line-height:26px;color:#3b4048;letter-spacing:0.5px">05/08/1984</div>
<div class="a nw" style="left:1054px;top:1043px;font-size:20.8px;line-height:26px;color:#3b4048;color:#2a7cc7;letter-spacing:0.1px">JUANITA ...</div>
<div class="a" style="left:1186px;top:1043px;width:38px;height:30px;overflow:hidden"><div class="a nw" style="left:23px;top:0;font-size:20.8px;line-height:26px;color:#3b4048">G</div></div>
<div class="a" style="left:1248.4px;top:1034.8px;width:44px;height:44px;border-radius:50%;background:#f7f8f9;box-shadow:0 2px 3px rgba(120,125,135,.28)"></div>
<div class="a" style="left:1304.4px;top:1034.8px;width:44px;height:44px;border-radius:50%;background:#f7f8f9;box-shadow:0 2px 3px rgba(120,125,135,.28)"></div>
<div class="a" style="left:1360.7px;top:1034.8px;width:44px;height:44px;border-radius:50%;background:#f7f8f9;box-shadow:0 2px 3px rgba(120,125,135,.28)"></div>
<svg class="a" style="left:1258.4px;top:1044.8px" width="24" height="24" viewBox="0 0 24 24"><path d="M4.5 9 A 8.2 8.2 0 1 1 6 18.5" stroke="#555a63" stroke-width="1.8" fill="none"/><path d="M2.5 4.5 V 10 H 8" stroke="#555a63" stroke-width="1.8" fill="none"/><path d="M11.5 8 V 12.5 L 14.5 15.5" stroke="#555a63" stroke-width="1.8" fill="none"/></svg>
<svg class="a" style="left:1314.4px;top:1044.8px" width="24" height="24" viewBox="0 0 24 24"><path d="M6 19.5 L 3.5 22 L 5 17 C 3 15.5, 2.5 13.5, 2.5 12 C 2.5 7, 6.5 3.5, 12 3.5 C 17.5 3.5, 21.5 7, 21.5 12 C 21.5 17, 17.5 20.5, 12 20.5 C 9.5 20.5, 7.5 20, 6 19.5 Z" stroke="#555a63" stroke-width="1.7" fill="none" stroke-linejoin="round"/><path d="M8 12 L 11 15 L 16 9.5" stroke="#555a63" stroke-width="1.7" fill="none"/></svg>
<svg class="a" style="left:1372.7px;top:1053.8px" width="20" height="6" viewBox="0 0 20 6"><circle cx="3" cy="3" r="2" fill="#555a63"/><circle cx="10" cy="3" r="2" fill="#555a63"/><circle cx="17" cy="3" r="2" fill="#555a63"/></svg>
<div class="a" style="left:34px;top:1113px;width:28px;height:28px;border:1.5px solid #c9cdd3;border-radius:3px;background:#fff"></div>
<div class="a nw" style="left:130px;top:1110px;font-size:20.8px;line-height:26px;color:#3b4048;letter-spacing:0.2px">12 MONTH</div>
<div class="a nw" style="left:324px;top:1110px;font-size:20.8px;line-height:26px;color:#3b4048">No</div>
<div class="a nw" style="left:494px;top:1110px;font-size:20.8px;line-height:26px;color:#3b4048;letter-spacing:-0.05px">SCREENING MAMMOGRAPHY, BIL...</div>
<div class="a nw" style="left:894px;top:1110px;font-size:20.8px;line-height:26px;color:#3b4048;letter-spacing:0.5px">05/08/1984</div>
<div class="a nw" style="left:1054px;top:1110px;font-size:20.8px;line-height:26px;color:#3b4048;color:#2a7cc7;letter-spacing:0.1px">JUANITA ...</div>
<div class="a" style="left:1186px;top:1110px;width:38px;height:30px;overflow:hidden"><div class="a nw" style="left:23px;top:0;font-size:20.8px;line-height:26px;color:#3b4048">G</div></div>
<div class="a" style="left:1248.4px;top:1102.2px;width:44px;height:44px;border-radius:50%;background:#f7f8f9;box-shadow:0 2px 3px rgba(120,125,135,.28)"></div>
<div class="a" style="left:1304.4px;top:1102.2px;width:44px;height:44px;border-radius:50%;background:#f7f8f9;box-shadow:0 2px 3px rgba(120,125,135,.28)"></div>
<div class="a" style="left:1360.7px;top:1102.2px;width:44px;height:44px;border-radius:50%;background:#f7f8f9;box-shadow:0 2px 3px rgba(120,125,135,.28)"></div>
<svg class="a" style="left:1258.4px;top:1112.2px" width="24" height="24" viewBox="0 0 24 24"><path d="M4.5 9 A 8.2 8.2 0 1 1 6 18.5" stroke="#555a63" stroke-width="1.8" fill="none"/><path d="M2.5 4.5 V 10 H 8" stroke="#555a63" stroke-width="1.8" fill="none"/><path d="M11.5 8 V 12.5 L 14.5 15.5" stroke="#555a63" stroke-width="1.8" fill="none"/></svg>
<svg class="a" style="left:1314.4px;top:1112.2px" width="24" height="24" viewBox="0 0 24 24"><path d="M6 19.5 L 3.5 22 L 5 17 C 3 15.5, 2.5 13.5, 2.5 12 C 2.5 7, 6.5 3.5, 12 3.5 C 17.5 3.5, 21.5 7, 21.5 12 C 21.5 17, 17.5 20.5, 12 20.5 C 9.5 20.5, 7.5 20, 6 19.5 Z" stroke="#555a63" stroke-width="1.7" fill="none" stroke-linejoin="round"/><path d="M8 12 L 11 15 L 16 9.5" stroke="#555a63" stroke-width="1.7" fill="none"/></svg>
<svg class="a" style="left:1372.7px;top:1121.2px" width="20" height="6" viewBox="0 0 20 6"><circle cx="3" cy="3" r="2" fill="#555a63"/><circle cx="10" cy="3" r="2" fill="#555a63"/><circle cx="17" cy="3" r="2" fill="#555a63"/></svg>
<div class="a" style="left:34px;top:1181px;width:28px;height:28px;border:1.5px solid #c9cdd3;border-radius:3px;background:#fff"></div>
<div class="a nw" style="left:130px;top:1178px;font-size:20.8px;line-height:26px;color:#3b4048;letter-spacing:0.2px">12 MONTH</div>
<div class="a nw" style="left:324px;top:1178px;font-size:20.8px;line-height:26px;color:#3b4048">No</div>
<div class="a nw" style="left:494px;top:1178px;font-size:20.8px;line-height:26px;color:#3b4048;letter-spacing:-0.05px">SCREENING MAMMOGRAM (77057)</div>
<div class="a nw" style="left:894px;top:1178px;font-size:20.8px;line-height:26px;color:#3b4048;letter-spacing:0.5px">08/28/1983</div>
<div class="a nw" style="left:1054px;top:1178px;font-size:20.8px;line-height:26px;color:#3b4048;color:#2a7cc7;letter-spacing:0.1px">JUDY FO...</div>
<div class="a" style="left:1186px;top:1178px;width:38px;height:30px;overflow:hidden"><div class="a nw" style="left:23px;top:0;font-size:20.8px;line-height:26px;color:#3b4048">M</div></div>
<div class="a" style="left:1248.4px;top:1169.7px;width:44px;height:44px;border-radius:50%;background:#f7f8f9;box-shadow:0 2px 3px rgba(120,125,135,.28)"></div>
<div class="a" style="left:1304.4px;top:1169.7px;width:44px;height:44px;border-radius:50%;background:#f7f8f9;box-shadow:0 2px 3px rgba(120,125,135,.28)"></div>
<div class="a" style="left:1360.7px;top:1169.7px;width:44px;height:44px;border-radius:50%;background:#f7f8f9;box-shadow:0 2px 3px rgba(120,125,135,.28)"></div>
<svg class="a" style="left:1258.4px;top:1179.7px" width="24" height="24" viewBox="0 0 24 24"><path d="M4.5 9 A 8.2 8.2 0 1 1 6 18.5" stroke="#555a63" stroke-width="1.8" fill="none"/><path d="M2.5 4.5 V 10 H 8" stroke="#555a63" stroke-width="1.8" fill="none"/><path d="M11.5 8 V 12.5 L 14.5 15.5" stroke="#555a63" stroke-width="1.8" fill="none"/></svg>
<svg class="a" style="left:1314.4px;top:1179.7px" width="24" height="24" viewBox="0 0 24 24"><path d="M6 19.5 L 3.5 22 L 5 17 C 3 15.5, 2.5 13.5, 2.5 12 C 2.5 7, 6.5 3.5, 12 3.5 C 17.5 3.5, 21.5 7, 21.5 12 C 21.5 17, 17.5 20.5, 12 20.5 C 9.5 20.5, 7.5 20, 6 19.5 Z" stroke="#555a63" stroke-width="1.7" fill="none" stroke-linejoin="round"/><path d="M8 12 L 11 15 L 16 9.5" stroke="#555a63" stroke-width="1.7" fill="none"/></svg>
<svg class="a" style="left:1372.7px;top:1188.7px" width="20" height="6" viewBox="0 0 20 6"><circle cx="3" cy="3" r="2" fill="#555a63"/><circle cx="10" cy="3" r="2" fill="#555a63"/><circle cx="17" cy="3" r="2" fill="#555a63"/></svg>
</div>
<div class="a" style="left:1586px;top:189px;width:1.5px;height:1345px;background:#d6dae0"></div>
<div class="a" style="left:1801px;top:329px;width:6px;height:849px;border-radius:3px;background:#b0b1b6"></div>
<div class="a" style="left:367px;top:1538px;width:290px;height:7px;border-radius:4px;background:#b0b3b8"></div>
<div class="a nw" style="left:385px;top:1561px;font-size:20.5px;line-height:24px;color:#72767e">Showing</div>
<div class="a nw" style="left:385px;top:1586px;font-size:20.5px;line-height:24px;color:#3b4048">1 - 25 of 28</div>
<svg class="a" style="left:922px;top:1575px" width="20" height="20" viewBox="0 0 20 20"><rect x="2" y="2" width="3" height="16" fill="#6b7079"/><path d="M17 2 V 18 L 6 10 Z" fill="#6b7079"/></svg>
<svg class="a" style="left:962px;top:1574px" width="18" height="22" viewBox="0 0 18 22"><path d="M13 3 L 5 11 L 13 19" stroke="#6b7079" stroke-width="1.8" fill="none"/></svg>
<div class="a nw" style="left:1000px;top:1567px;width:38px;height:35px;border:2px solid #1a7cc4;border-radius:7px;font-size:20px;line-height:31px;text-align:center;color:#3b4048">1</div>
<div class="a nw" style="left:1054px;top:1570px;font-size:20px;line-height:24px;color:#3b4048">2</div>
<svg class="a" style="left:1098px;top:1574px" width="18" height="22" viewBox="0 0 18 22"><path d="M5 3 L 13 11 L 5 19" stroke="#6b7079" stroke-width="1.8" fill="none"/></svg>
<svg class="a" style="left:1137px;top:1575px" width="20" height="20" viewBox="0 0 20 20"><path d="M3 2 V 18 L 14 10 Z" fill="#6b7079"/><rect x="15" y="2" width="3" height="16" fill="#6b7079"/></svg>
<div class="a nw" style="left:1625px;top:1572px;font-size:18.5px;line-height:22px;color:#72767e">Per page</div>
<div class="a" style="left:1710px;top:1561px;width:79px;height:47px;border:1.5px solid #d5d8dd;border-radius:8px;background:#fff"></div>
<div class="a nw" style="left:1727px;top:1571px;font-size:21px;line-height:26px;color:#2b2f36">25</div>
<svg class="a" style="left:1758px;top:1578px" width="18" height="12" viewBox="0 0 18 12"><path d="M2 2 L 9 9.5 L 16 2" stroke="#2b2f36" stroke-width="2" fill="none"/></svg>
<!-- RIGHT: BREAST HEALTH BAR -->
<div class="a card" style="left:1835px;top:189px;width:1346px;height:67px"></div>
<div class="a" style="left:1846px;top:200px;width:45px;height:45px;border-radius:50%;background:#1261d8"></div>
<div class="a nw" style="left:1903px;top:208px;font-size:22.5px;line-height:26px;color:#2b2f36;letter-spacing:0.4px">Breast Health</div>
<div class="a" style="left:2487px;top:201px;width:218px;height:41px;border-radius:7px;background:#1b80c8"></div>
<svg class="a" style="left:2509px;top:210px" width="24" height="24" viewBox="0 0 24 24"><path d="M4.5 9 A 8.2 8.2 0 1 1 6 18.5" stroke="#fff" stroke-width="2.6" fill="none"/><path d="M2.5 4.5 V 10 H 8" stroke="#fff" stroke-width="2.6" fill="none"/><path d="M12 8 V 12.5 L 15 15.5" stroke="#fff" stroke-width="2.4" fill="none"/></svg>
<div class="a nw" style="left:2537px;top:209px;font-size:21.2px;line-height:25px;color:#fff">Activity Tracker</div>
<div class="a" style="left:2716px;top:201px;width:260px;height:41px;border-radius:7px;background:#1b80c8"></div>
<svg class="a" style="left:2739px;top:211px" width="22" height="22" viewBox="0 0 22 22"><path d="M5 18 L 2 21 L 3.5 15.5 C 2 14, 1.5 12.5, 1.5 11 C 1.5 6, 5.5 2.5, 11 2.5 C 16.5 2.5, 20.5 6, 20.5 11 C 20.5 16, 16.5 19.5, 11 19.5 C 8.5 19.5, 6.5 19, 5 18 Z" fill="#fff"/><path d="M7 11 L 10 14 L 15 8.5" stroke="#1b80c8" stroke-width="2.2" fill="none"/></svg>
<div class="a nw" style="left:2766px;top:209px;font-size:20.6px;line-height:25px;color:#fff">Follow Up Complete</div>
<div class="a" style="left:2987px;top:200px;width:172px;height:44px;border-radius:7px;border:1.5px solid #1a7cc4;background:#fff"></div>
<svg class="a" style="left:3010px;top:211px" width="18" height="22" viewBox="0 0 18 22"><rect x="1" y="3" width="16" height="18" rx="2" fill="#1a7cc4"/><rect x="5" y="0.5" width="8" height="5" rx="1.5" fill="#1a7cc4" stroke="#fff" stroke-width="1"/><rect x="5" y="10" width="8" height="1.8" fill="#fff"/><rect x="5" y="14.5" width="8" height="1.8" fill="#fff"/></svg>
<div class="a nw" style="left:3037px;top:212px;font-size:16.9px;line-height:22px;color:#2a7cc7">Patient Chart</div>
<!-- EXAM CARD -->
<div class="a card" style="left:1835px;top:279px;width:895px;height:748px"></div>
<svg class="a" style="left:1852px;top:320px" width="22" height="16" viewBox="0 0 22 16"><path d="M2 3 L 11 12 L 20 3" stroke="#2563eb" stroke-width="2.6" fill="none"/></svg>
<div class="a" style="left:1886px;top:304px;width:60px;height:45px;border-radius:7px;background:#ebe8fb"></div>
<div class="a nw" style="left:1886px;top:314px;width:60px;text-align:center;font-size:21.5px;line-height:26px;font-weight:700;color:#3b3be0">MG</div>
<div class="a nw" style="left:1958px;top:300px;font-size:21.5px;line-height:26px;color:#15181d;letter-spacing:0.8px">MAMMO DIAGNOSTIC BILATERAL( G0204 )</div>
<div class="a nw" style="left:1958px;top:330px;font-size:21px;line-height:26px;color:#2b2f36;letter-spacing:-0.1px">11/01/2022</div>
<div class="a" style="left:2065px;top:330px;width:1.3px;height:27px;background:#c5c9cf"></div>
<div class="a nw" style="left:2072px;top:330px;font-size:21px;line-height:26px;color:#2b2f36">Miami - Aventura</div>
<div class="a" style="left:2235px;top:330px;width:1.3px;height:27px;background:#c5c9cf"></div>
<div class="a nw" style="left:2241px;top:330px;font-size:21px;line-height:26px;color:#2b2f36">Accession #: D25674</div>
<div class="a" style="left:2667px;top:304px;width:45px;height:45px;border-radius:50%;border:2px solid #1d5f9e;background:#fff;box-shadow:0 1px 3px rgba(30,80,140,.35)"></div>
<svg class="a" style="left:2686px;top:315px" width="8" height="24" viewBox="0 0 8 24"><circle cx="4" cy="5" r="1.8" fill="#1d3f66"/><circle cx="4" cy="11.5" r="1.8" fill="#1d3f66"/><circle cx="4" cy="18" r="1.8" fill="#1d3f66"/></svg>
<div class="a" style="left:1853px;top:376px;width:859px;height:42px;border:1.5px solid #c5c9cf;border-radius:8px"></div>
<div class="a" style="left:1853px;top:376px;width:429px;height:42px;border:2.5px solid #1a7cc4;border-radius:8px;background:#fff"></div>
<div class="a nw" style="left:2023px;top:385px;font-size:20.6px;line-height:24px;color:#2a7cc7">Summary</div>
<div class="a nw" style="left:2379px;top:385px;font-size:20.6px;line-height:24px;color:#1f2329">Biopsies &amp; Pathology</div>
<div class="a" style="left:1853px;top:448px;width:859px;height:561px;border:1.5px solid #c5c9cf;border-top:4px solid #1565d8;border-radius:7px"></div>
<div class="a nw" style="left:1887px;top:469px;font-size:18px;line-height:22px;color:#7a7f88;letter-spacing:0.25px">BIRADS</div><div class="a nw" style="left:1887px;top:494px;font-size:20.7px;line-height:24px;color:#1f2329">BIRADS - 4</div>
<div class="a nw" style="left:2085px;top:469px;font-size:18px;line-height:22px;color:#7a7f88;letter-spacing:0.25px">Laterality</div><div class="a nw" style="left:2085px;top:494px;font-size:20.7px;line-height:24px;color:#7a7f88">--</div>
<div class="a nw" style="left:2283px;top:469px;font-size:18px;line-height:22px;color:#7a7f88;letter-spacing:0.25px">Type</div><div class="a nw" style="left:2283px;top:494px;font-size:20.7px;line-height:24px;color:#1f2329">Diagnostic</div>
<div class="a nw" style="left:1887px;top:538px;font-size:18px;line-height:22px;color:#7a7f88;letter-spacing:0.25px">Breast Density Type</div><div class="a nw" style="left:1887px;top:561px;font-size:20.7px;line-height:24px;color:#7a7f88">--</div>
<div class="a nw" style="left:2283px;top:538px;font-size:18px;line-height:22px;color:#7a7f88;letter-spacing:0.25px">Recall Type (BIRADS-0)</div><div class="a nw" style="left:2283px;top:561px;font-size:20.7px;line-height:24px;color:#1f2329">NONE</div>
<div class="a nw" style="left:1887px;top:605px;font-size:18px;line-height:22px;color:#7a7f88;letter-spacing:0.25px">Background Enhancement</div><div class="a nw" style="left:1887px;top:629px;font-size:20.7px;line-height:24px;color:#7a7f88">--</div>
<div class="a nw" style="left:2283px;top:605px;font-size:18px;line-height:22px;color:#7a7f88;letter-spacing:0.25px">Radiologist</div><div class="a nw" style="left:2283px;top:629px;font-size:20.7px;line-height:24px;color:#1f2329">Henderson Nancy</div>
<div class="a nw" style="left:1887px;top:673px;font-size:18px;line-height:22px;color:#7a7f88;letter-spacing:0.25px">Surgeon</div><div class="a nw" style="left:1887px;top:695px;font-size:20.7px;line-height:24px;color:#7a7f88">--</div>
<div class="a nw" style="left:2085px;top:673px;font-size:18px;line-height:22px;color:#7a7f88;letter-spacing:0.25px">Notify by User</div><div class="a nw" style="left:2085px;top:695px;font-size:20.7px;line-height:24px;color:#7a7f88">--</div>
<div class="a nw" style="left:2283px;top:673px;font-size:18px;line-height:22px;color:#7a7f88;letter-spacing:0.25px">Notify Date/Time</div><div class="a nw" style="left:2283px;top:695px;font-size:20.7px;line-height:24px;color:#7a7f88">--</div>
<div class="a nw" style="left:1887px;top:739px;font-size:18px;line-height:22px;color:#7a7f88;letter-spacing:0.25px">Recall</div><div class="a nw" style="left:1887px;top:764px;font-size:20.7px;line-height:24px;color:#1f2329">6 Weeks</div>
<div class="a nw" style="left:2085px;top:739px;font-size:18px;line-height:22px;color:#7a7f88;letter-spacing:0.25px">Follow Up Date</div><div class="a nw" style="left:2085px;top:764px;font-size:20.7px;line-height:24px;color:#1f2329">12/13/2022</div>
<div class="a nw" style="left:2283px;top:739px;font-size:18px;line-height:22px;color:#7a7f88;letter-spacing:0.25px">Lay Letter</div><div class="a nw" style="left:2283px;top:764px;font-size:20.7px;line-height:24px;color:#1f2329">11/23/2022</div>
<div class="a nw" style="left:2480px;top:739px;font-size:18px;line-height:22px;color:#7a7f88;letter-spacing:0.25px">Recall Letter</div><div class="a nw" style="left:2480px;top:764px;font-size:20.7px;line-height:24px;color:#1f2329">11/23/2022</div>
<div class="a nw" style="left:1887px;top:807px;font-size:18px;line-height:22px;color:#7a7f88;letter-spacing:0.25px">Other Findings</div><div class="a nw" style="left:1887px;top:829px;font-size:20.7px;line-height:24px;color:#7a7f88">--</div>
<div class="a nw" style="left:1887px;top:874px;font-size:18px;line-height:22px;color:#7a7f88;letter-spacing:0.25px">Ultrasound findings</div><div class="a nw" style="left:1887px;top:897px;font-size:20.7px;line-height:24px;color:#7a7f88">--</div>
<div class="a nw" style="left:1887px;top:942px;font-size:18px;line-height:22px;color:#7a7f88;letter-spacing:0.25px">Recommendations</div><div class="a nw" style="left:1887px;top:964px;font-size:20.7px;line-height:24px;color:#7a7f88">--</div>
<div class="a" style="left:2541px;top:359px;width:186px;height:158px;background:#fff;border-radius:4px;box-shadow:0 2px 6px rgba(60,70,90,.3)"></div>
<div class="a" style="left:2541px;top:371px;width:186px;height:89px;background:#f3f7fc"></div>
<div class="a nw" style="left:2554px;top:384px;font-size:15.7px;line-height:20px;color:#2a7cc7">Edit Exam</div>
<div class="a nw" style="left:2554px;top:430px;font-size:16.6px;line-height:20px;color:#2a7cc7">Biopsy and Pathology</div>
<div class="a nw" style="left:2554px;top:474px;font-size:16.3px;line-height:20px;color:#3b4048">Audit trail</div>
<!-- ACTIVITY HISTORY -->
<div class="a card" style="left:1835px;top:1044px;width:895px;height:362px"></div>
<svg class="a" style="left:1852px;top:1077px" width="22" height="16" viewBox="0 0 22 16"><path d="M2 3 L 11 12 L 20 3" stroke="#2563eb" stroke-width="2.6" fill="none"/></svg>
<div class="a" style="left:1886px;top:1061px;width:45px;height:45px;border-radius:50%;background:#b23ad6"></div>
<svg class="a" style="left:1896px;top:1071px" width="25" height="25" viewBox="0 0 24 24"><path d="M4.5 9 A 8.2 8.2 0 1 1 6 18.5" stroke="#fff" stroke-width="2.5" fill="none"/><path d="M2.5 4.5 V 10 H 8" stroke="#fff" stroke-width="2.5" fill="none"/><path d="M12 8 V 12.5 L 15 15.5" stroke="#fff" stroke-width="2.3" fill="none"/></svg>
<div class="a nw" style="left:1943px;top:1068px;font-size:28px;line-height:32px;color:#1f2329">Activity History</div>
<div class="a nw" style="left:2389px;top:1071px;font-size:21.3px;line-height:24px;color:#6b7079">Activity Status</div>
<div class="a" style="left:2540px;top:1061px;width:172px;height:45px;border:1.5px solid #a3a8b0;border-radius:5px;background:#fff"></div>
<div class="a nw" style="left:2553px;top:1071px;font-size:20.5px;line-height:24px;color:#2b2f36">All</div>
<svg class="a" style="left:2688px;top:1078px" width="18" height="12" viewBox="0 0 18 12"><path d="M2 2 L 9 9.5 L 16 2" stroke="#2a7cc7" stroke-width="2.4" fill="none"/></svg>
<div class="a" style="left:1852px;top:1118px;width:860px;height:1.3px;background:#d9dce1"></div>
<div class="a nw" style="left:1852px;top:1135px;width:103px;height:42px;border:2px solid #1a5fa0;border-radius:8px;background:#e6f1fa;box-shadow:0 1px 3px rgba(26,95,160,.45);font-size:20.2px;line-height:38px;font-weight:700;text-align:center;color:#1f3550">All (1)</div>
<div class="a nw" style="left:1966px;top:1135px;width:229px;height:42px;border:1.5px solid #b8bcc4;border-radius:8px;background:#fff;font-size:20.2px;line-height:38px;font-weight:700;text-align:center;color:#1f2329">Contact Patient (1)</div>
<div class="a nw" style="left:2206px;top:1135px;width:252px;height:42px;border:1.5px solid #c8ccd3;border-radius:8px;background:#f9fafb;font-size:20.2px;line-height:38px;font-weight:700;text-align:center;color:#a6abb3">Contact Referring (0)</div>
<div class="a nw" style="left:1852px;top:1194px;width:268px;height:42px;border:1.5px solid #c8ccd3;border-radius:8px;background:#f9fafb;font-size:20.2px;line-height:38px;font-weight:700;text-align:center;color:#a6abb3">Contact Laboratory (0)</div>
<div class="a nw" style="left:2132px;top:1194px;width:138px;height:42px;border:1.5px solid #c8ccd3;border-radius:8px;background:#f9fafb;font-size:20.2px;line-height:38px;font-weight:700;text-align:center;color:#a6abb3">Tasks (0)</div>
<div class="a nw" style="left:2282px;top:1194px;width:187px;height:42px;border:1.5px solid #c8ccd3;border-radius:8px;background:#f9fafb;font-size:20.2px;line-height:38px;font-weight:700;text-align:center;color:#a6abb3">Comments (0)</div>
<div class="a" style="left:1852px;top:1253px;width:860px;height:136px;border:1.5px solid #c8ccd3;border-top:4px solid #e53935;border-radius:6px;background:#fff;overflow:hidden"><div class="a" style="left:0;top:0;width:860px;height:71px;background:#f7f8fa;border-bottom:1.3px solid #d9dce1"></div></div>
<div class="a" style="left:1870px;top:1270px;width:45px;height:45px;border-radius:50%;background:#e53935"></div>
<svg class="a" style="left:1879px;top:1282px" width="27" height="21" viewBox="0 0 27 21"><rect x="1" y="1" width="25" height="19" rx="1.5" fill="#fff"/><path d="M1.5 2 L 13.5 11 L 25.5 2" stroke="#e53935" stroke-width="1.8" fill="none"/></svg>
<div class="a nw" style="left:1926px;top:1268px;font-size:22.4px;line-height:26px;color:#1f2329">Email</div>
<div class="a nw" style="left:1926px;top:1296px;font-size:21.4px;line-height:25px;color:#6b7079">08/09/2023</div>
<div class="a" style="left:2046px;top:1294px;width:1.5px;height:28px;background:#6b7079"></div>
<div class="a nw" style="left:2056px;top:1296px;font-size:21.4px;line-height:25px;color:#6b7079">05:03 PM by MarySmith</div>
<div class="a nw" style="left:2515px;top:1275px;width:180px;height:36px;border-radius:18px;background:#e53935;font-size:19.6px;line-height:36px;font-weight:700;color:#fff;text-align:center">Emailed patient</div>
<div class="a nw" style="left:1870px;top:1347px;font-size:20.5px;line-height:24px;color:#2b2f36">Emailed Patient.</div>
<!-- REFERRALS -->
<div class="a card" style="left:1835px;top:1446px;width:895px;height:260px"></div>
<div class="a" style="left:1852px;top:1463px;width:45px;height:45px;border-radius:50%;background:#e8625c"></div>
<svg class="a" style="left:1862px;top:1472px" width="25" height="27" viewBox="0 0 32 36"><circle cx="16" cy="8" r="7" fill="#fff"/><path d="M2 35 V 28 C 2 21, 7 18, 11 18 L 16 24 L 21 18 C 25 18, 30 21, 30 28 V 35 Z" fill="#fff"/><path d="M10 19 V 27 M 22 19 V 27" stroke="#e8625c" stroke-width="1.8"/><circle cx="10" cy="29" r="2" stroke="#e8625c" stroke-width="1.5" fill="none"/><path d="M19.5 31 V 28.5 A 2.5 2.5 0 0 1 24.5 28.5 V 31" stroke="#e8625c" stroke-width="1.5" fill="none"/></svg>
<div class="a nw" style="left:1908px;top:1472px;font-size:26px;line-height:30px;color:#1f2329">Referrals</div>
<svg class="a" style="left:2623px;top:1476px" width="19" height="19" viewBox="0 0 19 19"><path d="M9.5 1 V 18 M 1 9.5 H 18" stroke="#2a7cc7" stroke-width="2.2"/></svg>
<div class="a" style="left:2661px;top:1474px;width:1.3px;height:22px;background:#d5d8dd"></div>
<svg class="a" style="left:2678px;top:1473px" width="24" height="24" viewBox="0 0 24 24"><path d="M11 3 H 2 V 22 H 21 V 13" stroke="#2a7cc7" stroke-width="2.2" fill="none"/><path d="M14 1.5 H 22.5 V 10 M 22 2 L 11 13" stroke="#2a7cc7" stroke-width="2.2" fill="none"/></svg>
<div class="a" style="left:1852px;top:1524px;width:860px;height:1.3px;background:#d9dce1"></div>
<div class="a" style="left:1852px;top:1543px;width:860px;height:120px;border:1.5px solid #c8ccd3;border-top:4px solid #e8625c;border-radius:6px;background:#fff"></div>
<div class="a nw" style="left:1870px;top:1569px;font-size:22.8px;line-height:26px;color:#1f2329">MICHAEL SMITH , MD</div>
<div class="a nw" style="left:1870px;top:1599px;font-size:20.5px;line-height:24px;color:#6b7079">Referring Physician</div>
<svg class="a" style="left:2545px;top:1584px" width="23" height="22" viewBox="0 0 23 22"><path d="M2 7 H 19 M 14 2 L 19.5 7 L 14 12" stroke="#2a7cc7" stroke-width="2.2" fill="none"/><path d="M21 15 H 4 M 9 10 L 3.5 15 L 9 20" stroke="#2a7cc7" stroke-width="2.2" fill="none"/></svg>
<div class="a" style="left:2585px;top:1584px;width:1.3px;height:22px;background:#d5d8dd"></div>
<svg class="a" style="left:2603px;top:1586px" width="23" height="22" viewBox="0 0 23 22"><path d="M2 2 H 21 V 15 H 9 L 4 20 V 15 H 2 Z" stroke="#2a7cc7" stroke-width="2" fill="none" stroke-linejoin="round"/><path d="M6 7 H 16 M 6 11 H 12" stroke="#2a7cc7" stroke-width="2"/></svg>
<div class="a nw" style="left:2614px;top:1573px;width:18px;height:18px;border-radius:50%;background:#d32f2f;color:#fff;font-size:14px;line-height:18px;text-align:center;font-weight:700">0</div>
<div class="a" style="left:2643px;top:1584px;width:1.3px;height:22px;background:#d5d8dd"></div>
<svg class="a" style="left:2663px;top:1584px" width="19" height="22" viewBox="0 0 19 22"><path d="M1 5 H 18" stroke="#d32f2f" stroke-width="2"/><path d="M6.5 4.5 V 1.5 H 12.5 V 4.5" stroke="#d32f2f" stroke-width="1.8" fill="none"/><path d="M3 6 L 4 21 H 15 L 16 6" stroke="#d32f2f" stroke-width="2" fill="none"/><path d="M7 9 V 18 M 9.5 9 V 18 M 12 9 V 18" stroke="#d32f2f" stroke-width="1.6"/></svg>
<!-- RIGHT SCROLLBAR -->
<div class="a" style="left:2740px;top:284px;width:6px;height:771px;border-radius:3px;background:#6b6f78"></div>
<!-- PATIENT CARD -->
<div class="a card" style="left:2761px;top:279px;width:421px;height:1341px"></div>
<svg class="a" style="left:2770px;top:290px" width="400" height="245" viewBox="0 0 400 245">
<defs>
<linearGradient id="lg1" x1="0" y1="0" x2="1" y2="1"><stop offset="0" stop-color="#e2e6ee"/><stop offset="0.6" stop-color="#e8ebeb"/><stop offset="1" stop-color="#e5e9e2"/></linearGradient>
<filter id="sh" x="-10%" y="-10%" width="130%" height="140%"><feGaussianBlur stdDeviation="4"/></filter>
<filter id="bl1"><feGaussianBlur stdDeviation="0.6"/></filter>
<linearGradient id="bg2" x1="0" y1="0" x2="0" y2="1"><stop offset="0" stop-color="#86c1e3"/><stop offset="1" stop-color="#74b3d9"/></linearGradient>
</defs>
<rect x="13" y="14" width="372" height="220" rx="12" fill="#707070" opacity="0.6" filter="url(#sh)"/>
<rect x="7" y="6" width="370" height="218" rx="11" fill="url(#lg1)" stroke="#c4c9d1" stroke-width="1"/>
<g fill="#d3d8e0" opacity="0.85">
<rect x="122" y="30" width="20" height="130"/><rect x="146" y="18" width="18" height="150"/><rect x="168" y="48" width="22" height="120"/><rect x="196" y="26" width="14" height="130"/>
<rect x="262" y="22" width="24" height="140"/><rect x="290" y="54" width="16" height="100"/><rect x="310" y="14" width="14" height="140"/><rect x="328" y="40" width="28" height="110"/>
</g>
<path d="M200 150 C 250 128, 320 138, 377 148 V 224 H 200 Z" fill="#e0e6cf" opacity="0.9"/>
<path d="M260 175 C 300 160, 350 175, 377 165 V 224 H 250 Z" fill="#d6e1ec" opacity="0.8"/>
<g fill="#c9b287" opacity="0.75"><rect x="262" y="92" width="42" height="20" rx="4"/><circle cx="274" cy="116" r="7"/><circle cx="296" cy="116" r="7"/><rect x="300" y="118" width="60" height="30" rx="5"/><circle cx="315" cy="150" r="7"/><circle cx="345" cy="150" r="7"/></g>
<g filter="url(#bl1)">
<text x="22" y="40" font-family="Liberation Sans" font-weight="700" font-size="29" fill="#2b2c6a" textLength="110" lengthAdjust="spacingAndGlyphs">KANSAS</text>
<text x="232" y="29" font-family="Liberation Sans" font-weight="700" font-size="10" fill="#3e4178" text-anchor="middle">DRIVER'S</text>
<text x="232" y="40" font-family="Liberation Sans" font-weight="700" font-size="10" fill="#3e4178" text-anchor="middle">LICENSE</text>
<circle cx="328" cy="33" r="12.5" fill="#c4a631"/><path d="M328 24.5 L 330.7 30.8 L 337.3 31 L 332.2 35.3 L 334 41.8 L 328 38 L 322 41.8 L 323.8 35.3 L 318.7 31 L 325.3 30.8 Z" fill="#f2ecd2"/>
<text x="349" y="28" font-family="Liberation Sans" font-weight="700" font-size="6.5" fill="#5a5f84">USA</text><text x="351" y="36" font-family="Liberation Sans" font-weight="700" font-size="6.5" fill="#5a5f84">KS</text>
<rect x="22" y="55" width="99" height="124" fill="url(#bg2)"/>
<path d="M34 179 C 30 130, 34 78, 72 72 C 110 78, 114 130, 110 179 Z" fill="#3a2a22"/>
<ellipse cx="72" cy="118" rx="24" ry="31" fill="#dcae8e"/>
<path d="M47 110 C 48 80, 96 78, 97 110 C 90 92, 58 90, 47 110 Z" fill="#3a2a22"/>
<path d="M57 127 C 64 139, 80 139, 87 127 C 80 131, 64 131, 57 127 Z" fill="#fff" stroke="#a0493a" stroke-width="1.2"/>
<path d="M60 111 Q 64 108 68 111 M 76 111 Q 80 108 84 111" stroke="#2a1f1a" stroke-width="2.2" fill="none"/>
<path d="M40 179 C 44 160, 56 153, 72 151 C 90 153, 100 160, 104 179 Z" fill="#c0262c"/>
<path d="M58 151 C 62 160, 82 160, 86 151 L 84 148 H 60 Z" fill="#b02226"/>
<g font-family="Liberation Sans" font-weight="700" fill="#2c2f3c">
<text x="141" y="66" font-size="5.5">4d LIC NO.</text>
<text x="186" y="66" font-size="13.5" textLength="88" lengthAdjust="spacingAndGlyphs">K12-34-5678</text>
<text x="150" y="79" font-size="5.5">3 DOB</text>
<text x="173" y="79" font-size="11.5" textLength="72" lengthAdjust="spacingAndGlyphs">01/11/1966</text>
<text x="149" y="92" font-size="10.5">SAMPLE</text>
<text x="149" y="104.6" font-size="10.5" textLength="115" lengthAdjust="spacingAndGlyphs">CARON ELIZABETH</text>
<text x="149" y="114" font-size="7">123 NORTH STREET</text>
<text x="149" y="123" font-size="6.5">APT. 2</text>
<text x="149" y="132" font-size="7">TOPEKA, KS 66612-1234</text>
<text x="149" y="142.7" font-size="6.5">CLASS A</text>
<text x="215" y="142.7" font-size="5">9a END</text><text x="250" y="142.7" font-size="9">NONE</text>
<text x="215" y="153.4" font-size="5">12 REST</text><text x="250" y="153.4" font-size="9">NONE</text>
<text x="149" y="162" font-size="6.5">15 SEX F</text><text x="149" y="171" font-size="6.5">16 HGT 5'-06"</text><text x="149" y="181" font-size="6.5">17 WGT 140 lb</text><text x="149" y="191" font-size="6.5">18 EYES BRO</text>
<text x="225" y="185" font-size="15" fill="#585b62" textLength="64" lengthAdjust="spacingAndGlyphs">01/11/66</text>
<text x="149" y="204" font-size="5.5">5 DD XX1234WWXX1</text><text x="160" y="211" font-size="5">23XWWMX123XWW12</text>
<text x="282" y="65" font-size="5">4a ISS</text><text x="310" y="65" font-size="8" textLength="56" lengthAdjust="spacingAndGlyphs">01/11/2017</text>
<text x="282" y="79" font-size="5">4b EXP</text><text x="310" y="79" font-size="8" textLength="56" lengthAdjust="spacingAndGlyphs">01/11/2023</text>
</g>
<text x="237" y="204" font-family="Liberation Sans" font-size="6" fill="#b3342e" font-weight="700">&#9829; DONOR</text>
<text x="22" y="200" font-family="Liberation Serif" font-style="italic" font-size="21" fill="#222" textLength="106" lengthAdjust="spacingAndGlyphs">Caron Sample</text>
<rect x="306" y="150" width="52" height="60" fill="#d9dbdd"/>
<path d="M312 210 C 308 175, 314 158, 332 156 C 350 158, 356 175, 352 210 Z" fill="#6d7073"/>
<ellipse cx="332" cy="180" rx="14" ry="18" fill="#b9bbbd"/>
<path d="M314 210 C 318 198, 324 196, 332 196 C 340 196, 346 198, 350 210 Z" fill="#96989a"/>
</g>
</svg>
<div class="a" style="left:2779px;top:569px;width:45px;height:45px;border-radius:50%;background:#e2a900"></div>
<svg class="a" style="left:2789px;top:578px" width="25" height="26" viewBox="0 0 25 26"><circle cx="12.5" cy="8" r="6.5" fill="#fff"/><path d="M2 24 C 2 17, 6 15, 12.5 15 C 19 15, 23 17, 23 24 Z" fill="#fff"/></svg>
<div class="a" style="left:2836px;top:558px;width:4px;height:66px;background:#1a7cc4;border-radius:2px"></div>
<div class="a" style="left:2840px;top:624px;width:1.3px;height:980px;background:#d5d8dd"></div>
<div class="a nw" style="left:2853px;top:559px;font-size:19.5px;line-height:24px;color:#2a7cc7">ISABELLA BROWNLEE</div>
<div class="a nw" style="left:2853px;top:585px;font-size:21px;line-height:24px;color:#6b7079">Patient Info</div>
<svg class="a" style="left:3139px;top:573px" width="8" height="22" viewBox="0 0 8 22"><circle cx="4" cy="3.5" r="2.1" fill="#2a7cc7"/><circle cx="4" cy="10.5" r="2.1" fill="#2a7cc7"/><circle cx="4" cy="17.5" r="2.1" fill="#2a7cc7"/></svg>
<div class="a" style="left:2853px;top:623px;width:313px;height:1.5px;background:#d5d8dd"></div>
<div class="a" style="left:2777px;top:640px;width:48px;height:48px;border-radius:50%;border:1.5px solid #6b7079"></div>
<svg class="a" style="left:2789px;top:652px" width="24" height="24" viewBox="0 0 24 24"><path d="M4.5 9 A 8.2 8.2 0 1 1 6 18.5" stroke="#6b7079" stroke-width="1.6" fill="none"/><path d="M2.5 4.5 V 10 H 8" stroke="#6b7079" stroke-width="1.6" fill="none"/><path d="M12 8 V 12.5 L 15 15.5" stroke="#6b7079" stroke-width="1.6" fill="none"/></svg>
<div class="a" style="left:2777px;top:713px;width:48px;height:48px;border-radius:50%;border:1.5px solid #6b7079"></div>
<svg class="a" style="left:2789px;top:727px" width="24" height="20" viewBox="0 0 24 20"><path d="M2 4 L 4 6 L 7 2" stroke="#555" stroke-width="1.5" fill="none"/><circle cx="4" cy="11" r="1.5" fill="#555"/><circle cx="4" cy="17" r="1.5" fill="#555"/><path d="M10 4 H 22 M 10 10.5 H 22 M 10 17 H 22" stroke="#555" stroke-width="2.2"/></svg>
<div class="a nw" style="left:2853px;top:648px;font-size:17.8px;line-height:22px;color:#6b7079">MRN</div>
<div class="a nw" style="left:3009px;top:648px;font-size:17.8px;line-height:22px;color:#6b7079">External ID</div>
<div class="a nw" style="left:2853px;top:674px;font-size:18.7px;line-height:22px;color:#1f2329">IDS1396</div>
<div class="a nw" style="left:2853px;top:709px;font-size:17.8px;line-height:22px;color:#6b7079">DOB</div>
<div class="a nw" style="left:3009px;top:709px;font-size:17.8px;line-height:22px;color:#6b7079">Age</div>
<div class="a nw" style="left:2853px;top:736px;font-size:18.7px;line-height:22px;color:#1f2329">03/15/1975</div>
<div class="a nw" style="left:3009px;top:736px;font-size:18.7px;line-height:22px;color:#1f2329">48</div>
<div class="a nw" style="left:2853px;top:772px;font-size:17.8px;line-height:22px;color:#6b7079">Sex</div>
<div class="a nw" style="left:3009px;top:772px;font-size:17.8px;line-height:22px;color:#6b7079"><span style="font-weight:400;color:#6b7079;font-size:17.8px;-webkit-text-stroke:0.4px #6b7079">Social Security #</span></div>
<div class="a nw" style="left:2853px;top:798px;font-size:18.7px;line-height:22px;color:#1f2329">Female</div>
<div class="a nw" style="left:2853px;top:833px;font-size:17.8px;line-height:22px;color:#6b7079">Language</div>
<div class="a nw" style="left:3009px;top:833px;font-size:17.8px;line-height:22px;color:#6b7079">Translator</div>
<div class="a nw" style="left:2853px;top:856px;font-size:18.7px;line-height:22px;color:#1f2329">--</div>
<div class="a nw" style="left:3009px;top:859px;font-size:18.7px;line-height:22px;color:#1f2329">No</div>
<div class="a nw" style="left:2853px;top:922px;font-size:20.5px;line-height:24px;color:#1f2329;letter-spacing:0.4px">Contact Information</div>
<div class="a" style="left:2853px;top:951px;width:313px;height:2px;background:#ccd0d6"></div>
<div class="a nw" style="left:2853px;top:963px;font-size:17.8px;line-height:22px;color:#6b7079"><b style="font-weight:400;font-size:17.8px;-webkit-text-stroke:0.4px #6b7079">Home #</b></div>
<div class="a nw" style="left:3009px;top:963px;font-size:17.8px;line-height:22px;color:#6b7079"><b style="font-weight:400;font-size:17.8px;-webkit-text-stroke:0.4px #6b7079">Cell #</b></div>
<div class="a nw" style="left:2853px;top:990px;font-size:18.7px;line-height:22px;color:#1f2329">(305) 555-0001</div>
<div class="a nw" style="left:2853px;top:1025px;font-size:17.8px;line-height:22px;color:#6b7079"><b style="font-weight:400;font-size:17.8px;-webkit-text-stroke:0.4px #6b7079">Work Phone #</b></div>
<div class="a nw" style="left:2853px;top:1088px;font-size:17.8px;line-height:22px;color:#6b7079"><b style="font-weight:400;font-size:17.8px;-webkit-text-stroke:0.4px #6b7079">Address</b></div>
<div class="a nw" style="left:2853px;top:1201px;font-size:17.8px;line-height:22px;color:#6b7079">Email</div>
<div class="a nw" style="left:2853px;top:1228px;font-size:18.7px;line-height:22px;color:#1f2329">izzy@jbrownlee.com</div>
<div class="a nw" style="left:2853px;top:1277px;font-size:20.5px;line-height:24px;color:#1f2329;letter-spacing:0.4px">Primary Contacts</div>
<div class="a" style="left:2853px;top:1306px;width:313px;height:2px;background:#ccd0d6"></div>
<div class="a" style="left:2853px;top:1318px;width:313px;height:163px;border-top:4.5px solid #71757e;border-radius:6px;background:#f1f2f4"></div>
<div class="a" style="left:2870px;top:1357px;width:91px;height:91px;border-radius:50%;background:#adb4bb"></div>
<svg class="a" style="left:2895px;top:1379px" width="44" height="46" viewBox="0 0 44 46"><rect x="2" y="2" width="32" height="42" rx="3" stroke="#fff" stroke-width="2.6" fill="none"/><circle cx="18" cy="17" r="4" stroke="#fff" stroke-width="2.2" fill="none"/><path d="M10 32 C 10 26, 14 24, 18 24 C 22 24, 26 26, 26 32" stroke="#fff" stroke-width="2.2" fill="none"/><path d="M39 8 V 18 M 39 22 V 32" stroke="#fff" stroke-width="2.2"/></svg>
<div class="a nw" style="left:2973px;top:1340px;font-size:23px;line-height:33.5px;color:#1f2329;letter-spacing:0.6px">No contacts<br>added</div>
<div class="a nw" style="left:2972px;top:1425px;width:165px;height:40px;border:1.5px solid #2060d8;border-radius:7px;background:#fff;font-size:21.5px;line-height:37px;text-align:center;color:#2060d8;letter-spacing:0.3px">+ Add Contact</div>
<div class="a" style="left:339px;top:1620px;width:2866px;height:23px;background:#e8ebf2"></div>
<!--CONTENT-->
<div id="frameI"></div><div id="frameO"></div>
</body></html>
